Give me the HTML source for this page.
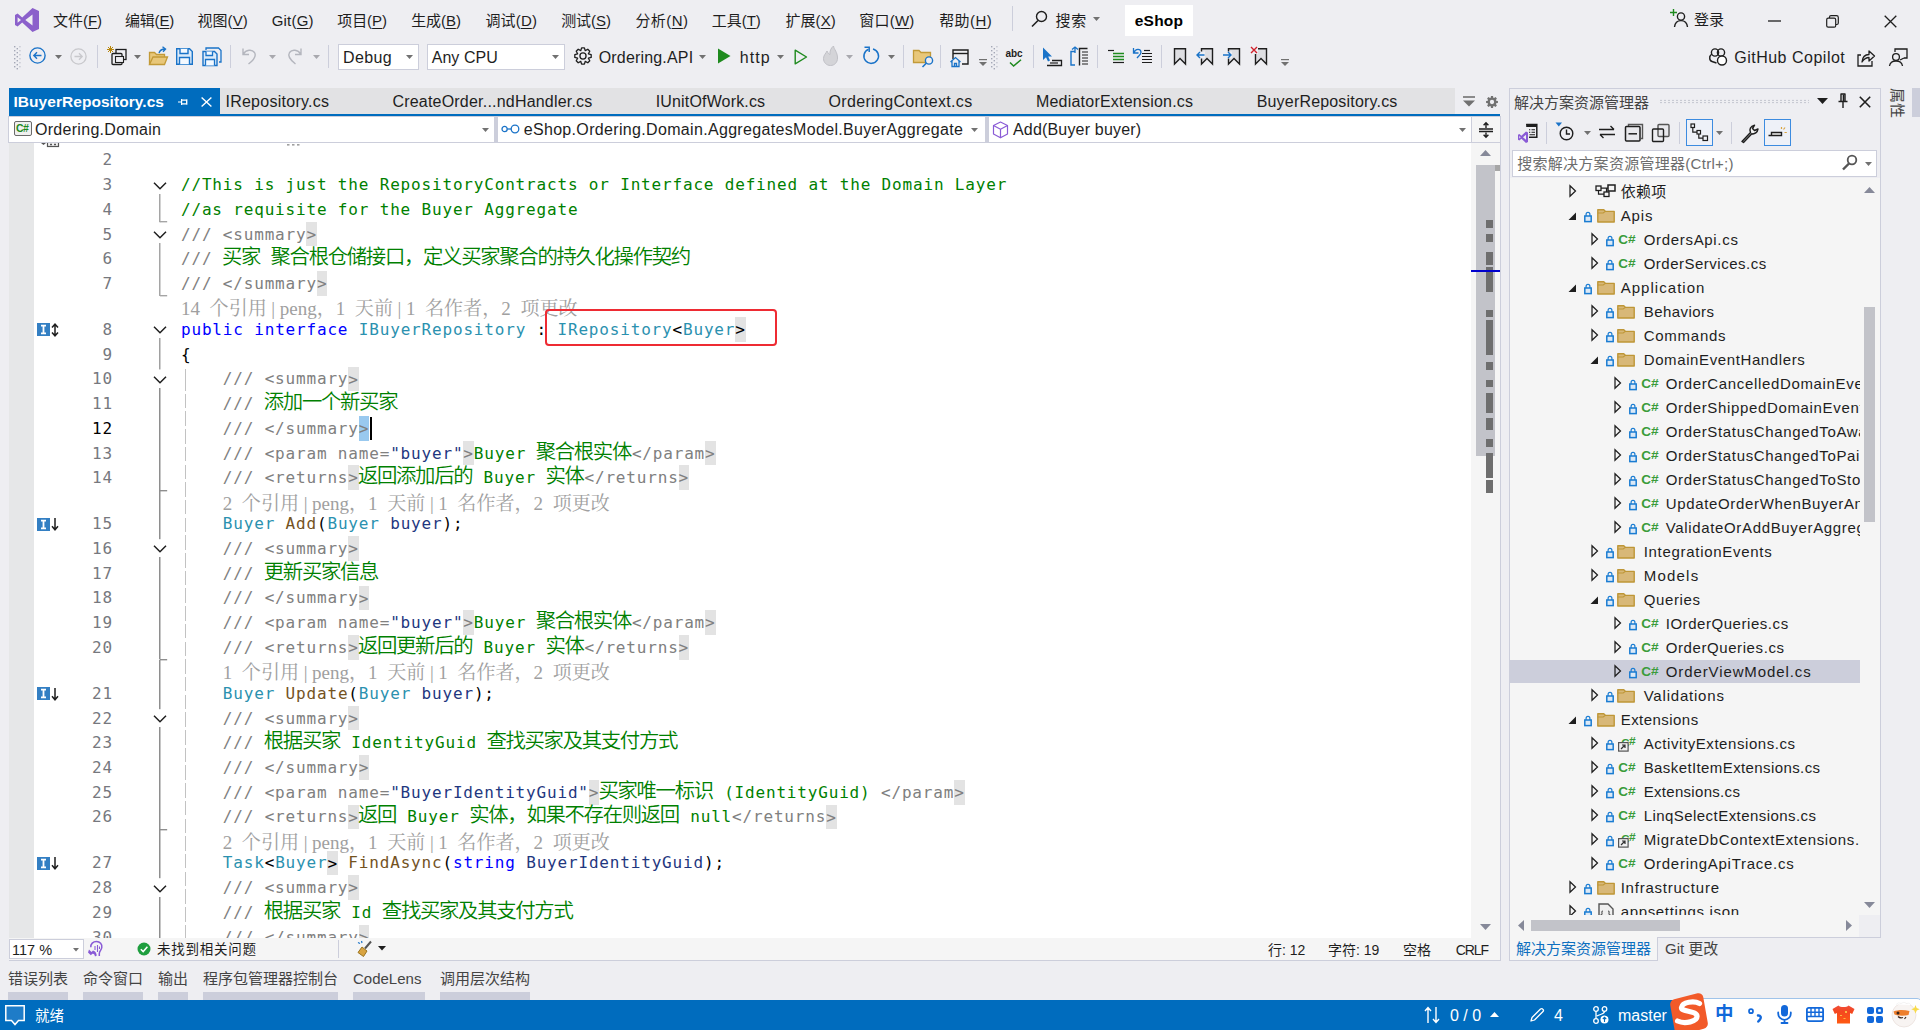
<!DOCTYPE html>
<html lang="zh-CN"><head><meta charset="utf-8"><title>eShop - IBuyerRepository.cs</title>
<style>
html,body{margin:0;padding:0}
body{width:1920px;height:1030px;position:relative;overflow:hidden;background:#EEEEF2;font-family:'Liberation Sans','Noto Sans CJK SC',sans-serif;font-size:15px;color:#1E1E1E}
.a{position:absolute;white-space:nowrap}
.t{position:absolute;white-space:nowrap;line-height:20px;height:20px}
u{text-decoration:underline;text-underline-offset:2px;text-decoration-thickness:1px}
svg{position:absolute;overflow:visible}
.code{position:absolute;white-space:pre;font-family:'DejaVu Sans Mono','Liberation Mono','Noto Sans CJK SC',monospace;font-size:16px;letter-spacing:0.824px;line-height:25px;height:25px;color:#000}
.code .z{font-family:'Noto Sans CJK SC',sans-serif;font-size:20.4px;line-height:0;letter-spacing:-1.33px;font-weight:350;position:relative;left:-0.9px}
.ln{position:absolute;white-space:pre;font-family:'DejaVu Sans Mono','Liberation Mono','Noto Sans CJK SC',monospace;font-size:16px;letter-spacing:0.824px;line-height:25px;height:25px;color:#6E7B8B;width:80px;text-align:right}
.cl{position:absolute;white-space:pre;font-family:'Liberation Serif',serif;font-size:19px;word-spacing:4.8px;line-height:20px;height:20px;color:#A0A0A0}
.cl .cz{font-family:'Noto Serif CJK SC',serif;font-size:19.07px;line-height:0;word-spacing:0}
.cl .cb{display:inline-block;width:13px;text-align:center}
.g{color:#808080}.c{color:#008000}.k{color:#0000FF}.y{color:#2B91AF}.m{color:#74531F}.p{color:#1F377F}
.h{background:#E3E3E3;padding:2.9px 0}
.tr{position:absolute;white-space:nowrap;line-height:24px;height:24px;font-size:15px;color:#1E1E1E}
</style></head><body>

<svg style="left:15px;top:8px" width="24" height="24" viewBox="0 0 24 24"><path d="M17.5 0L24 3V21L17.5 24L7.2 14.6L2.6 18.4L0 17V7L2.6 5.6L7.2 9.4Z M17.5 6.6L10.3 12L17.5 17.4Z M2.6 9.2V14.8L6 12Z" fill="#8B60CB" fill-rule="evenodd"/></svg>
<div class="t" style="left:52.95px;top:11px;font-size:15px;letter-spacing:-0.014px;">文件(<u>F</u>)</div>
<div class="t" style="left:124.95px;top:11px;font-size:15px;letter-spacing:-0.183px;">编辑(<u>E</u>)</div>
<div class="t" style="left:197.45px;top:11px;font-size:15px;letter-spacing:0.067px;">视图(<u>V</u>)</div>
<div class="t" style="left:271.7px;top:11px;font-size:15px;letter-spacing:0.209px;">Git(<u>G</u>)</div>
<div class="t" style="left:337.2px;top:11px;font-size:15px;letter-spacing:-0.033px;">项目(<u>P</u>)</div>
<div class="t" style="left:411.2px;top:11px;font-size:15px;letter-spacing:-0.083px;">生成(<u>B</u>)</div>
<div class="t" style="left:485.45px;top:11px;font-size:15px;letter-spacing:0.151px;">调试(<u>D</u>)</div>
<div class="t" style="left:561.2px;top:11px;font-size:15px;letter-spacing:-0.083px;">测试(<u>S</u>)</div>
<div class="t" style="left:635.45px;top:11px;font-size:15px;letter-spacing:0.401px;">分析(<u>N</u>)</div>
<div class="t" style="left:711.7px;top:11px;font-size:15px;letter-spacing:-0.014px;">工具(<u>T</u>)</div>
<div class="t" style="left:785.45px;top:11px;font-size:15px;letter-spacing:0.067px;">扩展(<u>X</u>)</div>
<div class="t" style="left:859.2px;top:11px;font-size:15px;letter-spacing:0.236px;">窗口(<u>W</u>)</div>
<div class="t" style="left:939.2px;top:11px;font-size:15px;letter-spacing:0.401px;">帮助(<u>H</u>)</div>
<div class="a" style="left:1012px;top:6px;width:1px;height:25px;background:#CCCEDB;"></div>
<svg style="left:1031px;top:10px" width="18" height="18" viewBox="0 0 18 18"><circle cx="10.5" cy="6.5" r="5" fill="none" stroke="#1E1E1E" stroke-width="1.4"/><path d="M7 10.5L1 16.5" stroke="#1E1E1E" stroke-width="1.6"/></svg>
<div class="t" style="left:1055.45px;top:11px;font-size:15px;letter-spacing:0.792px;">搜索</div>
<svg style="left:1092.5px;top:17.0px" width="7" height="4" viewBox="0 0 7 4"><path d="M0 0H7L3.5 4Z" fill="#717171"/></svg>
<div class="a" style="left:1125px;top:5px;width:68px;height:31px;background:#FFFFFF;"></div>
<div class="t" style="left:1134.7px;top:11px;font-size:15.5px;color:#000;letter-spacing:0.245px;"><b>eShop</b></div>
<svg style="left:1670px;top:8px" width="20" height="20" viewBox="0 0 20 20"><path d="M3.5 1V8M0 4.5H7" stroke="#1E8A1E" stroke-width="1.4"/><circle cx="11" cy="8.5" r="3.6" fill="none" stroke="#1E1E1E" stroke-width="1.4"/><path d="M4.5 19C5 14.5 8 12.6 11 12.6S17 14.5 17.5 19" fill="none" stroke="#1E1E1E" stroke-width="1.4"/></svg>
<div class="t" style="left:1694px;top:10px;font-size:15px;">登录</div>
<svg style="left:1768px;top:20px" width="14" height="2" viewBox="0 0 14 2"><path d="M0 1H13" stroke="#1E1E1E" stroke-width="1.3"/></svg>
<svg style="left:1826px;top:15px" width="14" height="14" viewBox="0 0 14 14"><rect x=".7" y="3.2" width="9" height="9" rx="1.5" fill="none" stroke="#1E1E1E" stroke-width="1.2"/><path d="M3.5 3V2.2Q3.5 .7 5 .7H10.5Q12.3 .7 12.3 2.5V8Q12.3 9.5 10.8 9.5H10" fill="none" stroke="#1E1E1E" stroke-width="1.2"/></svg>
<svg style="left:1884px;top:15px" width="14" height="14" viewBox="0 0 14 14"><path d="M.7 .7L12.3 12.3M12.3 .7L.7 12.3" stroke="#1E1E1E" stroke-width="1.3"/></svg>
<svg style="left:14px;top:46px" width="7" height="21" viewBox="0 0 7 21"><rect x="0" y="0" width="1.4" height="1.4" fill="#A4A7B6"/><rect x="2.6" y="2" width="1.4" height="1.4" fill="#A4A7B6"/><rect x="5.2" y="0" width="1.4" height="1.4" fill="#C4C6D0"/><rect x="0" y="4" width="1.4" height="1.4" fill="#A4A7B6"/><rect x="2.6" y="6" width="1.4" height="1.4" fill="#A4A7B6"/><rect x="5.2" y="4" width="1.4" height="1.4" fill="#C4C6D0"/><rect x="0" y="8" width="1.4" height="1.4" fill="#A4A7B6"/><rect x="2.6" y="10" width="1.4" height="1.4" fill="#A4A7B6"/><rect x="5.2" y="8" width="1.4" height="1.4" fill="#C4C6D0"/><rect x="0" y="12" width="1.4" height="1.4" fill="#A4A7B6"/><rect x="2.6" y="14" width="1.4" height="1.4" fill="#A4A7B6"/><rect x="5.2" y="12" width="1.4" height="1.4" fill="#C4C6D0"/><rect x="0" y="16" width="1.4" height="1.4" fill="#A4A7B6"/><rect x="2.6" y="18" width="1.4" height="1.4" fill="#A4A7B6"/><rect x="5.2" y="16" width="1.4" height="1.4" fill="#C4C6D0"/><rect x="0" y="20" width="1.4" height="1.4" fill="#A4A7B6"/><rect x="2.6" y="22" width="1.4" height="1.4" fill="#A4A7B6"/><rect x="5.2" y="20" width="1.4" height="1.4" fill="#C4C6D0"/></svg>
<svg style="left:28px;top:46px" width="20" height="20" viewBox="0 0 20 20"><circle cx="9.5" cy="9.5" r="7.6" fill="none" stroke="#1A73C8" stroke-width="1.4"/><path d="M13.5 9.5H6M9 6.3L5.8 9.5L9 12.7" fill="none" stroke="#1A73C8" stroke-width="1.4"/></svg>
<svg style="left:55.0px;top:55.0px" width="7" height="4" viewBox="0 0 7 4"><path d="M0 0H7L3.5 4Z" fill="#717171"/></svg>
<svg style="left:69px;top:47px" width="20" height="20" viewBox="0 0 20 20"><circle cx="9.5" cy="9.5" r="7.6" fill="none" stroke="#C8C8CC" stroke-width="1.3"/><path d="M5.5 9.5H13M10 6.3L13.2 9.5L10 12.7" fill="none" stroke="#C8C8CC" stroke-width="1.3"/></svg>
<div class="a" style="left:97px;top:45px;width:1px;height:23px;background:#CCCEDB;"></div>
<svg style="left:106px;top:45px" width="24" height="24" viewBox="0 0 24 24"><path d="M4.5 1V8M1 4.5H8M2 2L7 7M7 2L2 7" stroke="#B8860B" stroke-width="1"/>
<rect x="10" y="4.5" width="10" height="10" fill="#F0F0F4" stroke="#1E1E1E" stroke-width="1.3"/>
<rect x="6" y="8.5" width="10" height="11" rx="1" fill="#F0F0F4" stroke="#1E1E1E" stroke-width="1.3"/>
<rect x="9.5" y="11.5" width="8" height="6" fill="#F0F0F4" stroke="#1E1E1E" stroke-width="1.1"/></svg>
<svg style="left:134.0px;top:55.0px" width="7" height="4" viewBox="0 0 7 4"><path d="M0 0H7L3.5 4Z" fill="#717171"/></svg>
<svg style="left:148px;top:46px" width="22" height="22" viewBox="0 0 22 22"><path d="M1.5 18.5V6.5H6.5L8.5 8.5H16.5V11" fill="#E8C77A" stroke="#C29A38" stroke-width="1.3"/>
<path d="M1.5 18.5L5 11H19.5L16.5 18.5Z" fill="#E8C77A" stroke="#C29A38" stroke-width="1.3"/>
<path d="M11 7C12 4 14 3 17 3M14.5 .8L17.5 3L15 5.8" fill="none" stroke="#1A73C8" stroke-width="1.4"/></svg>
<svg style="left:175px;top:47px" width="20" height="20" viewBox="0 0 20 20"><path d="M1.7 1.7H14.5L17.3 4.5V17.3H1.7Z" fill="#DCEBFA" stroke="#1A73C8" stroke-width="1.4"/>
<path d="M5 1.7V6.5H13V1.7M4.5 17.3V10.5H14.5V17.3" fill="#F4F9FF" stroke="#1A73C8" stroke-width="1.4"/></svg>
<svg style="left:201px;top:46px" width="22" height="22" viewBox="0 0 22 22"><path d="M5 4V2H17.5L20 4.5V16H18" fill="none" stroke="#1A73C8" stroke-width="1.3"/>
<path d="M2 5.5H13.5L16 8V19.5H2Z" fill="#DCEBFA" stroke="#1A73C8" stroke-width="1.4"/>
<path d="M5 5.5V9.5H11.5V5.5M4.5 19.5V13.5H13.5V19.5" fill="#F4F9FF" stroke="#1A73C8" stroke-width="1.3"/></svg>
<div class="a" style="left:230px;top:45px;width:1px;height:23px;background:#CCCEDB;"></div>
<svg style="left:240px;top:46px" width="20" height="20" viewBox="0 0 20 20"><path d="M3 2.5V8.5H9M3.3 8.2C6 3.5 12 3 14.5 6.5C17 10.5 13 14.5 8.5 18" fill="none" stroke="#B4B6BE" stroke-width="1.4"/></svg>
<svg style="left:269.0px;top:55.0px" width="7" height="4" viewBox="0 0 7 4"><path d="M0 0H7L3.5 4Z" fill="#A8A8AE"/></svg>
<svg style="left:284px;top:46px" width="20" height="20" viewBox="0 0 20 20"><path d="M17 2.5V8.5H11M16.7 8.2C14 3.5 8 3 5.5 6.5C3 10.5 7 14.5 11.5 18" fill="none" stroke="#B4B6BE" stroke-width="1.4"/></svg>
<svg style="left:313.0px;top:55.0px" width="7" height="4" viewBox="0 0 7 4"><path d="M0 0H7L3.5 4Z" fill="#A8A8AE"/></svg>
<div class="a" style="left:328px;top:45px;width:1px;height:23px;background:#CCCEDB;"></div>
<div class="a" style="left:338px;top:44px;width:81px;height:26px;background:#FFFFFF;border:1px solid #CCCEDB;box-sizing:border-box;"></div>
<div class="t" style="left:342.95px;top:48px;font-size:16px;letter-spacing:0.389px;">Debug</div>
<svg style="left:406.0px;top:55.0px" width="7" height="4" viewBox="0 0 7 4"><path d="M0 0H7L3.5 4Z" fill="#717171"/></svg>
<div class="a" style="left:427px;top:44px;width:138px;height:26px;background:#FFFFFF;border:1px solid #CCCEDB;box-sizing:border-box;"></div>
<div class="t" style="left:431.7px;top:48px;font-size:16px;letter-spacing:0.043px;">Any CPU</div>
<svg style="left:552.0px;top:55.0px" width="7" height="4" viewBox="0 0 7 4"><path d="M0 0H7L3.5 4Z" fill="#717171"/></svg>
<svg style="left:574px;top:47px" width="18" height="18" viewBox="0 0 18 18"><path d="M14.36 6.79L17.18 7.60L17.18 10.40L14.36 11.21L14.35 11.23L15.78 13.79L13.79 15.78L11.23 14.35L11.21 14.36L10.40 17.18L7.60 17.18L6.79 14.36L6.77 14.35L4.21 15.78L2.22 13.79L3.65 11.23L3.64 11.21L0.82 10.40L0.82 7.60L3.64 6.79L3.65 6.77L2.22 4.21L4.21 2.22L6.77 3.65L6.79 3.64L7.60 0.82L10.40 0.82L11.21 3.64L11.23 3.65L13.79 2.22L15.78 4.21L14.35 6.77Z" fill="none" stroke="#1E1E1E" stroke-width="1.3" stroke-linejoin="round"/><circle cx="9.0" cy="9.0" r="3.06" fill="none" stroke="#1E1E1E" stroke-width="1.3"/></svg>
<div class="t" style="left:598.7px;top:48px;font-size:16px;letter-spacing:0.176px;">Ordering.API</div>
<svg style="left:699.0px;top:55.0px" width="7" height="4" viewBox="0 0 7 4"><path d="M0 0H7L3.5 4Z" fill="#717171"/></svg>
<svg style="left:717px;top:48px" width="14" height="16" viewBox="0 0 14 16"><path d="M1 .5L13.5 8L1 15.5Z" fill="#1E8A1E"/></svg>
<div class="t" style="left:739.7px;top:48px;font-size:16px;letter-spacing:1.103px;">http</div>
<svg style="left:777.0px;top:55.0px" width="7" height="4" viewBox="0 0 7 4"><path d="M0 0H7L3.5 4Z" fill="#717171"/></svg>
<svg style="left:794px;top:49px" width="14" height="16" viewBox="0 0 14 16"><path d="M1.2 1.2L12.5 8L1.2 14.8Z" fill="none" stroke="#1E8A1E" stroke-width="1.4" stroke-linejoin="round"/></svg>
<svg style="left:821px;top:45px" width="20" height="22" viewBox="0 0 20 22"><path d="M12.5 1C13 4.5 16.5 7 16.5 13C16.5 17.5 13.5 20.5 9.5 20.5C5.5 20.5 2.5 17.5 2.5 13.5C2.5 10 5 8.5 6 6C7 8 7.5 9 9 9.5C8.5 6 10 3 12.5 1Z" fill="#D4D4D8" stroke="#C0C0C6" stroke-width="1"/></svg>
<svg style="left:846.0px;top:55.0px" width="7" height="4" viewBox="0 0 7 4"><path d="M0 0H7L3.5 4Z" fill="#A8A8AE"/></svg>
<svg style="left:861px;top:46px" width="20" height="20" viewBox="0 0 20 20"><path d="M7.5 3.3A7.3 7.3 0 1 0 12 3" fill="none" stroke="#1A73C8" stroke-width="1.5"/><path d="M3.5 1.2H8.2V6" fill="none" stroke="#1A73C8" stroke-width="1.5"/></svg>
<svg style="left:888.0px;top:55.0px" width="7" height="4" viewBox="0 0 7 4"><path d="M0 0H7L3.5 4Z" fill="#717171"/></svg>
<div class="a" style="left:903px;top:45px;width:1px;height:23px;background:#CCCEDB;"></div>
<svg style="left:912px;top:47px" width="24" height="22" viewBox="0 0 24 22"><path d="M1.5 15.5V3.5H7L9 5.5H18.5V15.5Z" fill="#E8C77A" stroke="#C29A38" stroke-width="1.3"/>
<circle cx="17" cy="13.5" r="3.6" fill="#EEEEF2" stroke="#1A73C8" stroke-width="1.4"/><path d="M14.5 16L10.5 20" stroke="#1A73C8" stroke-width="1.6"/></svg>
<div class="a" style="left:940px;top:45px;width:1px;height:23px;background:#CCCEDB;"></div>
<svg style="left:949px;top:47px" width="22" height="22" viewBox="0 0 22 22"><path d="M4 12V3H19V17H13" fill="none" stroke="#1E1E1E" stroke-width="1.4"/><path d="M4 6.5H19" stroke="#1E1E1E" stroke-width="1.4"/>
<path d="M1.5 15L6.5 10.5L11.5 15M3 14V19.5H10V14M5.5 19.5V16.5H7.5V19.5" fill="none" stroke="#1A73C8" stroke-width="1.3"/></svg>
<svg style="left:979px;top:59px" width="8" height="8" viewBox="0 0 8 8"><path d="M0 .6H8" stroke="#717171" stroke-width="1.2"/><path d="M0 3H8L4 7Z" fill="#717171"/></svg>
<svg style="left:991px;top:46px" width="7" height="21" viewBox="0 0 7 21"><rect x="0" y="0" width="1.4" height="1.4" fill="#A4A7B6"/><rect x="2.6" y="2" width="1.4" height="1.4" fill="#A4A7B6"/><rect x="5.2" y="0" width="1.4" height="1.4" fill="#C4C6D0"/><rect x="0" y="4" width="1.4" height="1.4" fill="#A4A7B6"/><rect x="2.6" y="6" width="1.4" height="1.4" fill="#A4A7B6"/><rect x="5.2" y="4" width="1.4" height="1.4" fill="#C4C6D0"/><rect x="0" y="8" width="1.4" height="1.4" fill="#A4A7B6"/><rect x="2.6" y="10" width="1.4" height="1.4" fill="#A4A7B6"/><rect x="5.2" y="8" width="1.4" height="1.4" fill="#C4C6D0"/><rect x="0" y="12" width="1.4" height="1.4" fill="#A4A7B6"/><rect x="2.6" y="14" width="1.4" height="1.4" fill="#A4A7B6"/><rect x="5.2" y="12" width="1.4" height="1.4" fill="#C4C6D0"/><rect x="0" y="16" width="1.4" height="1.4" fill="#A4A7B6"/><rect x="2.6" y="18" width="1.4" height="1.4" fill="#A4A7B6"/><rect x="5.2" y="16" width="1.4" height="1.4" fill="#C4C6D0"/><rect x="0" y="20" width="1.4" height="1.4" fill="#A4A7B6"/><rect x="2.6" y="22" width="1.4" height="1.4" fill="#A4A7B6"/><rect x="5.2" y="20" width="1.4" height="1.4" fill="#C4C6D0"/></svg>
<div class="t" style="left:1005.5px;top:47.5px;font-size:10px;color:#1E1E1E;letter-spacing:-.1px;line-height:12px;height:12px"><b>abc</b></div>
<svg style="left:1009px;top:58.5px" width="13" height="9" viewBox="0 0 13 9"><path d="M1 3.5L4.6 7L12 .8" fill="none" stroke="#1E8A1E" stroke-width="1.5"/></svg>
<div class="a" style="left:1033px;top:45px;width:1px;height:23px;background:#CCCEDB;"></div>
<svg style="left:1040px;top:46px" width="24" height="22" viewBox="0 0 24 22"><path d="M3 1.5V14L6 11.2L8 15.5L10 14.6L8.2 10.5H12Z" fill="#1A73C8"/>
<path d="M7 19.5H21.5V14.5H12" fill="none" stroke="#1E1E1E" stroke-width="1.3"/><path d="M10 17H18" stroke="#1E1E1E" stroke-width="1.2"/></svg>
<svg style="left:1068px;top:46px" width="24" height="22" viewBox="0 0 24 22"><path d="M7 5.5H3V19H7" fill="none" stroke="#1A73C8" stroke-width="1.4"/><path d="M4 3.5L7 1L10 3.5M7 1V7" fill="none" stroke="#1A73C8" stroke-width="1.3"/>
<path d="M11.5 19.5V2.5H19.5" fill="none" stroke="#1E1E1E" stroke-width="1.4"/><path d="M14 6H20M14 9H20M14 12H20M14 15H20M14 18H20" stroke="#1E1E1E" stroke-width="1.2"/></svg>
<div class="a" style="left:1097px;top:45px;width:1px;height:23px;background:#CCCEDB;"></div>
<svg style="left:1106px;top:48px" width="20" height="18" viewBox="0 0 20 18"><path d="M2 2.5H8" stroke="#1E1E1E" stroke-width="1.2"/><path d="M7 5.5H18M7 8.5H18M7 11.5H18" stroke="#1E8A1E" stroke-width="1.3"/><path d="M7 14.5H18" stroke="#1E1E1E" stroke-width="1.2"/></svg>
<svg style="left:1131px;top:46px" width="24" height="20" viewBox="0 0 24 20"><path d="M2.5 2V7H7.5M3 6.5C4.5 2.5 9.5 2.5 10 6C10.3 8.5 7.5 10 6 12" fill="none" stroke="#1A73C8" stroke-width="1.3"/><path d="M13 4.5H19" stroke="#1E1E1E" stroke-width="1.2"/><path d="M11 7.5H21M11 10.5H21M11 13.5H21M11 16.5H21" stroke="#1E1E1E" stroke-width="1.2"/></svg>
<div class="a" style="left:1161px;top:45px;width:1px;height:23px;background:#CCCEDB;"></div>
<svg style="left:1169px;top:46px" width="22" height="22" viewBox="0 0 22 22"><path d="M5.5 2.7H16.5V18L11 12.6L5.5 18Z" fill="#DEDEE2" stroke="#1E1E1E" stroke-width="1.4" stroke-linejoin="miter"/></svg>
<svg style="left:1196px;top:46px" width="22" height="22" viewBox="0 0 22 22"><path d="M5.5 2.7H16.5V18L11 12.6L5.5 18Z" fill="#DEDEE2" stroke="#1E1E1E" stroke-width="1.4" stroke-linejoin="miter"/><rect x="0" y="5.5" width="9" height="7" fill="#EEEEF2"/><path d="M8.5 9H1M4 6L1 9L4 12" fill="none" stroke="#1A73C8" stroke-width="1.4"/></svg>
<svg style="left:1223px;top:46px" width="22" height="22" viewBox="0 0 22 22"><path d="M5.5 2.7H16.5V18L11 12.6L5.5 18Z" fill="#DEDEE2" stroke="#1E1E1E" stroke-width="1.4" stroke-linejoin="miter"/><rect x="0" y="5.5" width="9" height="7" fill="#EEEEF2"/><path d="M0 9H8M5 6L8 9L5 12" fill="none" stroke="#1A73C8" stroke-width="1.4"/></svg>
<svg style="left:1250px;top:46px" width="22" height="22" viewBox="0 0 22 22"><path d="M5.5 2.7H16.5V18L11 12.6L5.5 18Z" fill="#DEDEE2" stroke="#1E1E1E" stroke-width="1.4" stroke-linejoin="miter"/><rect x="0" y="0" width="8" height="8" fill="#EEEEF2"/><path d="M1 1L7 7M7 1L1 7" stroke="#D0202A" stroke-width="1.4"/></svg>
<svg style="left:1281px;top:59px" width="8" height="8" viewBox="0 0 8 8"><path d="M0 .6H8" stroke="#717171" stroke-width="1.2"/><path d="M0 3H8L4 7Z" fill="#717171"/></svg>
<svg style="left:1708px;top:47px" width="22" height="20" viewBox="0 0 22 20"><circle cx="7" cy="5.5" r="3.6" fill="none" stroke="#1E1E1E" stroke-width="1.4"/><circle cx="13" cy="5.5" r="3.6" fill="none" stroke="#1E1E1E" stroke-width="1.4"/>
<path d="M3.8 7C1 9 1 13.5 4 14.5L8.5 16" fill="none" stroke="#1E1E1E" stroke-width="1.4"/><circle cx="14" cy="13.5" r="4.5" fill="#FFFFFF" stroke="#1E1E1E" stroke-width="1.4"/></svg>
<div class="t" style="left:1734.2px;top:48px;font-size:16px;letter-spacing:0.504px;">GitHub Copilot</div>
<svg style="left:1856px;top:48px" width="20" height="20" viewBox="0 0 20 20"><path d="M5 7H2V18H16V13" fill="none" stroke="#1E1E1E" stroke-width="1.3"/><path d="M6 14C6.5 9 9.5 6.5 13 6.5V3L18.5 8L13 13V9.5C10 9.5 8 11 6 14Z" fill="none" stroke="#1E1E1E" stroke-width="1.3" stroke-linejoin="round"/></svg>
<svg style="left:1887px;top:47px" width="22" height="22" viewBox="0 0 22 22"><path d="M8 5V2H20V11H17" fill="none" stroke="#1E1E1E" stroke-width="1.3"/><circle cx="9" cy="10" r="3.4" fill="none" stroke="#1E1E1E" stroke-width="1.3"/><path d="M2.5 19C3 15.5 6 14 9 14S15 15.5 15.5 19" fill="none" stroke="#1E1E1E" stroke-width="1.3"/><path d="M13 13L17 11" stroke="#1E1E1E" stroke-width="1.3"/></svg>
<div class="a" style="left:9px;top:88px;width:1446px;height:26px;background:#E2E2E4;"></div>
<div class="a" style="left:9px;top:114px;width:1491px;height:2px;background:#006CBE;"></div>
<div class="a" style="left:9px;top:88px;width:211px;height:28px;background:#006CBE;"></div>
<div class="t" style="left:13.45px;top:92px;font-size:15.5px;color:#FFFFFF;letter-spacing:0.052px;"><b>IBuyerRepository.cs</b></div>
<svg style="left:177.5px;top:96.5px" width="10" height="10" viewBox="0 0 10 10"><path d="M0 5H3.6M3.6 2V8M3.6 3.2H8.6V6.8H3.6M8.8 2.2V7.8" fill="none" stroke="#FFFFFF" stroke-width="1.2"/></svg>
<svg style="left:200.5px;top:96.5px" width="11" height="10" viewBox="0 0 11 10"><path d="M.6 .6L10.4 9.6M10.4 .6L.6 9.6" stroke="#FFFFFF" stroke-width="1.4"/></svg>
<div class="t" style="left:225.45px;top:91.5px;font-size:16px;color:#1E1E1E;letter-spacing:0.262px;">IRepository.cs</div>
<div class="t" style="left:392.45px;top:91.5px;font-size:16px;color:#1E1E1E;letter-spacing:0.205px;">CreateOrder...ndHandler.cs</div>
<div class="t" style="left:655.7px;top:91.5px;font-size:16px;color:#1E1E1E;letter-spacing:0.166px;">IUnitOfWork.cs</div>
<div class="t" style="left:828.45px;top:91.5px;font-size:16px;color:#1E1E1E;letter-spacing:0.348px;">OrderingContext.cs</div>
<div class="t" style="left:1035.95px;top:91.5px;font-size:16px;color:#1E1E1E;letter-spacing:0.219px;">MediatorExtension.cs</div>
<div class="t" style="left:1256.7px;top:91.5px;font-size:16px;color:#1E1E1E;letter-spacing:0.182px;">BuyerRepository.cs</div>
<svg style="left:1463px;top:96px" width="12" height="12" viewBox="0 0 12 12"><path d="M0 1H12" stroke="#717171" stroke-width="1.6"/><path d="M0 4.5H12L6 10.5Z" fill="#717171"/></svg>
<svg style="left:1486px;top:95.5px" width="12" height="12" viewBox="0 0 12 12"><path d="M10.24 4.69L11.91 4.98L11.91 7.02L10.24 7.31L9.93 8.07L10.90 9.46L9.46 10.90L8.07 9.93L7.31 10.24L7.02 11.91L4.98 11.91L4.69 10.24L3.93 9.93L2.54 10.90L1.10 9.46L2.07 8.07L1.76 7.31L0.09 7.02L0.09 4.98L1.76 4.69L2.07 3.93L1.10 2.54L2.54 1.10L3.93 2.07L4.69 1.76L4.98 0.09L7.02 0.09L7.31 1.76L8.07 2.07L9.46 1.10L10.90 2.54L9.93 3.93ZM8.16 6.0A2.16 2.16 0 1 0 3.84 6.0A2.16 2.16 0 1 0 8.16 6.0Z" fill="#717171" fill-rule="evenodd"/></svg>
<div class="a" style="left:8px;top:116px;width:1493px;height:27.3px;background:#FFFFFF;border:1px solid #CCCEDB;box-sizing:border-box;border-bottom-width:1.6px"></div>
<div class="a" style="left:494px;top:117px;width:4px;height:25px;background:#CCCEDB;"></div>
<div class="a" style="left:985px;top:117px;width:4px;height:25px;background:#CCCEDB;"></div>
<div class="a" style="left:1471px;top:116px;width:30px;height:27.3px;background:#F5F5F5;border:1px solid #CCCEDB;box-sizing:border-box;border-bottom-width:1.6px"></div>
<div class="a" style="left:14px;top:121px;width:18px;height:15px;background:#F0F0F0;border:1.5px solid #6A6A6A;box-sizing:border-box;border-radius:2px"></div>
<div class="t" style="left:16px;top:120px;font-size:10.5px;color:#1E8A1E;line-height:17px;height:17px;letter-spacing:-.5px"><b>C#</b></div>
<div class="t" style="left:34.95px;top:120px;font-size:16px;letter-spacing:0.301px;">Ordering.Domain</div>
<svg style="left:482.0px;top:128.0px" width="7" height="4" viewBox="0 0 7 4"><path d="M0 0H7L3.5 4Z" fill="#717171"/></svg>
<svg style="left:501px;top:123px" width="20" height="12" viewBox="0 0 20 12"><circle cx="3.6" cy="6" r="2.6" fill="none" stroke="#1A73C8" stroke-width="1.3"/><path d="M6.2 6H10" stroke="#1A73C8" stroke-width="1.3"/><circle cx="14" cy="6" r="3.8" fill="none" stroke="#1A73C8" stroke-width="1.3"/></svg>
<div class="t" style="left:523.7px;top:120px;font-size:16px;letter-spacing:0.329px;">eShop.Ordering.Domain.AggregatesModel.BuyerAggregate</div>
<svg style="left:971.0px;top:128.0px" width="7" height="4" viewBox="0 0 7 4"><path d="M0 0H7L3.5 4Z" fill="#717171"/></svg>
<svg style="left:992px;top:121px" width="17" height="18" viewBox="0 0 17 18"><path d="M8.5 1L15.5 4.5V13L8.5 16.8L1.5 13V4.5Z M1.5 4.5L8.5 8.2L15.5 4.5M8.5 8.2V16.8" fill="none" stroke="#8A5BD6" stroke-width="1.2" stroke-linejoin="round"/></svg>
<div class="t" style="left:1012.95px;top:120px;font-size:16px;letter-spacing:0.185px;">Add(Buyer buyer)</div>
<svg style="left:1459.0px;top:128.0px" width="7" height="4" viewBox="0 0 7 4"><path d="M0 0H7L3.5 4Z" fill="#717171"/></svg>
<svg style="left:1479px;top:122px" width="14" height="16" viewBox="0 0 14 16"><path d="M0 7H14M0 9.5H14" stroke="#1E1E1E" stroke-width="1.3"/><path d="M7 .8V6M4.6 3.2L7 .8L9.4 3.2M7 15.2V10.5M4.6 12.8L7 15.2L9.4 12.8" fill="none" stroke="#1E1E1E" stroke-width="1.4"/></svg>
<div class="a" style="left:9px;top:143.3px;width:1492px;height:794.7px;background:#FFFFFF;overflow:hidden">
<div class="a" style="left:0px;top:0px;width:25px;height:795px;background:#E6E7E8;"></div>
<div class="a" style="left:1462px;top:0px;width:29px;height:795px;background:#F5F5F5;"></div>
<div class="a" style="left:1491px;top:0px;width:1px;height:795px;background:#CCCEDB;"></div>
<svg style="left:32px;top:0px" width="20" height="5" viewBox="0 0 20 5"><path d="M0 0H5L2.5 2Z" fill="#555"/><rect x="6.5" y="-4" width="11" height="7.5" fill="#F0F0F0" stroke="#555" stroke-width="1.2"/><path d="M9 1.5H11M13 1.5H15" stroke="#555" stroke-width="1.4"/></svg>
<svg style="left:278px;top:1px" width="14" height="3" viewBox="0 0 14 3"><rect x="0" y="0" width="2.5" height="1.6" fill="#A0A0A0"/><rect x="5" y="0" width="2.5" height="1.6" fill="#A0A0A0"/><rect x="10" y="0" width="2.5" height="1.6" fill="#A0A0A0"/></svg>
<svg style="left:150.45px;top:50.31999999999999px" width="1.5" height="28.22" viewBox="0 0 1.5 28.22"><rect x="0" y="0" width="1.5" height="28.22" fill="#A5A5A5"/></svg>
<svg style="left:150.5px;top:77.94px" width="7.2" height="1.4" viewBox="0 0 7.2 1.4"><rect x="0" y="0" width="7.2" height="1.4" fill="#A5A5A5"/></svg>
<svg style="left:150.45px;top:99.75999999999999px" width="1.5" height="52.94" viewBox="0 0 1.5 52.94"><rect x="0" y="0" width="1.5" height="52.94" fill="#A5A5A5"/></svg>
<svg style="left:150.5px;top:152.1px" width="7.2" height="1.4" viewBox="0 0 7.2 1.4"><rect x="0" y="0" width="7.2" height="1.4" fill="#A5A5A5"/></svg>
<svg style="left:150.45px;top:195.17000000000002px" width="1.5" height="31.43999999999994" viewBox="0 0 1.5 31.43999999999994"><rect x="0" y="0" width="1.5" height="31.43999999999994" fill="#A0A0A0"/></svg>
<svg style="left:150.45px;top:244.60999999999996px" width="1.5" height="102.38" viewBox="0 0 1.5 102.38"><rect x="0" y="0" width="1.5" height="102.38" fill="#8E8E8E"/></svg>
<svg style="left:150.5px;top:346.38999999999993px" width="7.2" height="1.4" viewBox="0 0 7.2 1.4"><rect x="0" y="0" width="7.2" height="1.4" fill="#8E8E8E"/></svg>
<svg style="left:150.45px;top:346.98999999999995px" width="1.5" height="49.190000000000055" viewBox="0 0 1.5 49.190000000000055"><rect x="0" y="0" width="1.5" height="49.190000000000055" fill="#8E8E8E"/></svg>
<svg style="left:150.45px;top:414.18px" width="1.5" height="102.38" viewBox="0 0 1.5 102.38"><rect x="0" y="0" width="1.5" height="102.38" fill="#8E8E8E"/></svg>
<svg style="left:150.5px;top:515.9599999999999px" width="7.2" height="1.4" viewBox="0 0 7.2 1.4"><rect x="0" y="0" width="7.2" height="1.4" fill="#8E8E8E"/></svg>
<svg style="left:150.45px;top:516.56px" width="1.5" height="49.18999999999994" viewBox="0 0 1.5 49.18999999999994"><rect x="0" y="0" width="1.5" height="49.18999999999994" fill="#8E8E8E"/></svg>
<svg style="left:150.45px;top:583.75px" width="1.5" height="102.38" viewBox="0 0 1.5 102.38"><rect x="0" y="0" width="1.5" height="102.38" fill="#8E8E8E"/></svg>
<svg style="left:150.5px;top:685.5299999999999px" width="7.2" height="1.4" viewBox="0 0 7.2 1.4"><rect x="0" y="0" width="7.2" height="1.4" fill="#8E8E8E"/></svg>
<svg style="left:150.45px;top:686.1299999999999px" width="1.5" height="49.190000000000055" viewBox="0 0 1.5 49.190000000000055"><rect x="0" y="0" width="1.5" height="49.190000000000055" fill="#8E8E8E"/></svg>
<svg style="left:150.45px;top:753.3199999999999px" width="1.5" height="43.379999999999995" viewBox="0 0 1.5 43.379999999999995"><rect x="0" y="0" width="1.5" height="43.379999999999995" fill="#8E8E8E"/></svg>
<svg style="left:144px;top:38.31999999999999px" width="14" height="8" viewBox="0 0 14 8"><path d="M1 .8L7 6.8L13 .8" fill="none" stroke="#1E1E1E" stroke-width="1.5"/></svg>
<svg style="left:144px;top:87.75999999999999px" width="14" height="8" viewBox="0 0 14 8"><path d="M1 .8L7 6.8L13 .8" fill="none" stroke="#1E1E1E" stroke-width="1.5"/></svg>
<svg style="left:144px;top:183.17000000000002px" width="14" height="8" viewBox="0 0 14 8"><path d="M1 .8L7 6.8L13 .8" fill="none" stroke="#1E1E1E" stroke-width="1.5"/></svg>
<svg style="left:144px;top:232.60999999999996px" width="14" height="8" viewBox="0 0 14 8"><path d="M1 .8L7 6.8L13 .8" fill="none" stroke="#1E1E1E" stroke-width="1.5"/></svg>
<svg style="left:144px;top:402.18px" width="14" height="8" viewBox="0 0 14 8"><path d="M1 .8L7 6.8L13 .8" fill="none" stroke="#1E1E1E" stroke-width="1.5"/></svg>
<svg style="left:144px;top:571.75px" width="14" height="8" viewBox="0 0 14 8"><path d="M1 .8L7 6.8L13 .8" fill="none" stroke="#1E1E1E" stroke-width="1.5"/></svg>
<svg style="left:144px;top:741.3199999999999px" width="14" height="8" viewBox="0 0 14 8"><path d="M1 .8L7 6.8L13 .8" fill="none" stroke="#1E1E1E" stroke-width="1.5"/></svg>
<div class="a" style="left:175.6px;top:223.60999999999996px;height:573.09px;width:1.3px;background:repeating-linear-gradient(to bottom,#C2C2C2 0,#C2C2C2 14.5px,transparent 14.5px,transparent 17.7px);background-position:0 9.0px"></div>
<div class="a" style="left:27.5px;top:180.17000000000002px;width:13px;height:13px;background:#337FC3;"></div><svg style="left:27.5px;top:180.17000000000002px" width="13" height="13" viewBox="0 0 13 13"><path d="M4 2.7H9M4 10.3H9M6.5 2.7V10.3" stroke="#FFFFFF" stroke-width="1.8"/></svg><svg style="left:42px;top:179.67000000000002px" width="8" height="14" viewBox="0 0 8 14"><path d="M4 1.5V12.5M1 4.5L4 1.2L7 4.5M1 9.5L4 12.8L7 9.5" fill="none" stroke="#1E1E1E" stroke-width="1.5"/></svg>
<div class="a" style="left:27.5px;top:374.46px;width:13px;height:13px;background:#337FC3;"></div><svg style="left:27.5px;top:374.46px" width="13" height="13" viewBox="0 0 13 13"><path d="M4 2.7H9M4 10.3H9M6.5 2.7V10.3" stroke="#FFFFFF" stroke-width="1.8"/></svg><svg style="left:42px;top:373.96px" width="8" height="14" viewBox="0 0 8 14"><path d="M4 1V12.5M1 9.3L4 12.8L7 9.3" fill="none" stroke="#1E1E1E" stroke-width="1.5"/></svg>
<div class="a" style="left:27.5px;top:544.03px;width:13px;height:13px;background:#337FC3;"></div><svg style="left:27.5px;top:544.03px" width="13" height="13" viewBox="0 0 13 13"><path d="M4 2.7H9M4 10.3H9M6.5 2.7V10.3" stroke="#FFFFFF" stroke-width="1.8"/></svg><svg style="left:42px;top:543.53px" width="8" height="14" viewBox="0 0 8 14"><path d="M4 1V12.5M1 9.3L4 12.8L7 9.3" fill="none" stroke="#1E1E1E" stroke-width="1.5"/></svg>
<div class="a" style="left:27.5px;top:713.5999999999999px;width:13px;height:13px;background:#337FC3;"></div><svg style="left:27.5px;top:713.5999999999999px" width="13" height="13" viewBox="0 0 13 13"><path d="M4 2.7H9M4 10.3H9M6.5 2.7V10.3" stroke="#FFFFFF" stroke-width="1.8"/></svg><svg style="left:42px;top:713.0999999999999px" width="8" height="14" viewBox="0 0 8 14"><path d="M4 1V12.5M1 9.3L4 12.8L7 9.3" fill="none" stroke="#1E1E1E" stroke-width="1.5"/></svg>
<div class="ln" style="left:24px;top:4.10px;color:#76787E">2</div>
<div class="ln" style="left:24px;top:28.82px;color:#76787E">3</div>
<div class="code" style="left:172px;top:28.82px"><span class="c">//This is just the RepositoryContracts or Interface defined at the Domain Layer</span></div>
<div class="ln" style="left:24px;top:53.54px;color:#76787E">4</div>
<div class="code" style="left:172px;top:53.54px"><span class="c">//as requisite for the Buyer Aggregate</span></div>
<div class="ln" style="left:24px;top:78.26px;color:#76787E">5</div>
<div class="code" style="left:172px;top:78.26px"><span class="g">/// </span><span class="g">&lt;summary</span><span class="g h">&gt;</span></div>
<div class="ln" style="left:24px;top:102.98px;color:#76787E">6</div>
<div class="code" style="left:172px;top:102.98px"><span class="g">/// </span><span class="c"><span class="z">买家</span> <span class="z">聚合根仓储接口，定义买家聚合的持久化操作契约</span></span></div>
<div class="ln" style="left:24px;top:127.70px;color:#76787E">7</div>
<div class="code" style="left:172px;top:127.70px"><span class="g">/// </span><span class="g">&lt;/summary</span><span class="g h">&gt;</span></div>
<div class="ln" style="left:24px;top:173.67px;color:#76787E">8</div>
<div class="code" style="left:172px;top:173.67px"><span class="k">public</span> <span class="k">interface</span> <span class="y">IBuyerRepository</span> : <span class="y">IRepository</span>&lt;<span class="y">Buyer</span><span class="h">&gt;</span></div>
<div class="cl" style="left:172.0px;top:156.16px">14 <span class="cz">个引用</span><span class="cb">|</span>peng<span class="cz">，</span>1 <span class="cz">天前</span><span class="cb">|</span>1 <span class="cz">名作者，</span>2 <span class="cz">项更改</span></div>
<div class="ln" style="left:24px;top:198.39px;color:#76787E">9</div>
<div class="code" style="left:172px;top:198.39px">{</div>
<div class="ln" style="left:24px;top:223.11px;color:#76787E">10</div>
<div class="code" style="left:172px;top:223.11px">    <span class="g">/// </span><span class="g">&lt;summary</span><span class="g h">&gt;</span></div>
<div class="ln" style="left:24px;top:247.83px;color:#76787E">11</div>
<div class="code" style="left:172px;top:247.83px">    <span class="g">/// </span><span class="c"><span class="z">添加一个新买家</span></span></div>
<div class="ln" style="left:24px;top:272.55px;color:#000000">12</div>
<div class="code" style="left:172px;top:272.55px">    <span class="g">/// </span><span class="g">&lt;/summary</span><span class="g" style="background:#99C9EF;padding:2.9px 0">&gt;</span></div>
<div class="ln" style="left:24px;top:297.27px;color:#76787E">13</div>
<div class="code" style="left:172px;top:297.27px">    <span class="g">/// </span><span class="g">&lt;param name=</span><span class="p">"buyer"</span><span class="g h">&gt;</span><span class="c">Buyer <span class="z">聚合根实体</span></span><span class="g">&lt;/param</span><span class="g h">&gt;</span></div>
<div class="ln" style="left:24px;top:321.99px;color:#76787E">14</div>
<div class="code" style="left:172px;top:321.99px">    <span class="g">/// </span><span class="g">&lt;returns</span><span class="g h">&gt;</span><span class="c"><span class="z">返回添加后的</span> Buyer <span class="z">实体</span></span><span class="g">&lt;/returns</span><span class="g h">&gt;</span></div>
<div class="ln" style="left:24px;top:367.96px;color:#76787E">15</div>
<div class="code" style="left:172px;top:367.96px">    <span class="y">Buyer</span> <span class="m">Add</span>(<span class="y">Buyer</span> <span class="p">buyer</span>);</div>
<div class="cl" style="left:213.8px;top:350.45px">2 <span class="cz">个引用</span><span class="cb">|</span>peng<span class="cz">，</span>1 <span class="cz">天前</span><span class="cb">|</span>1 <span class="cz">名作者，</span>2 <span class="cz">项更改</span></div>
<div class="ln" style="left:24px;top:392.68px;color:#76787E">16</div>
<div class="code" style="left:172px;top:392.68px">    <span class="g">/// </span><span class="g">&lt;summary</span><span class="g h">&gt;</span></div>
<div class="ln" style="left:24px;top:417.40px;color:#76787E">17</div>
<div class="code" style="left:172px;top:417.40px">    <span class="g">/// </span><span class="c"><span class="z">更新买家信息</span></span></div>
<div class="ln" style="left:24px;top:442.12px;color:#76787E">18</div>
<div class="code" style="left:172px;top:442.12px">    <span class="g">/// </span><span class="g">&lt;/summary</span><span class="g h">&gt;</span></div>
<div class="ln" style="left:24px;top:466.84px;color:#76787E">19</div>
<div class="code" style="left:172px;top:466.84px">    <span class="g">/// </span><span class="g">&lt;param name=</span><span class="p">"buyer"</span><span class="g h">&gt;</span><span class="c">Buyer <span class="z">聚合根实体</span></span><span class="g">&lt;/param</span><span class="g h">&gt;</span></div>
<div class="ln" style="left:24px;top:491.56px;color:#76787E">20</div>
<div class="code" style="left:172px;top:491.56px">    <span class="g">/// </span><span class="g">&lt;returns</span><span class="g h">&gt;</span><span class="c"><span class="z">返回更新后的</span> Buyer <span class="z">实体</span></span><span class="g">&lt;/returns</span><span class="g h">&gt;</span></div>
<div class="ln" style="left:24px;top:537.53px;color:#76787E">21</div>
<div class="code" style="left:172px;top:537.53px">    <span class="y">Buyer</span> <span class="m">Update</span>(<span class="y">Buyer</span> <span class="p">buyer</span>);</div>
<div class="cl" style="left:213.8px;top:520.02px">1 <span class="cz">个引用</span><span class="cb">|</span>peng<span class="cz">，</span>1 <span class="cz">天前</span><span class="cb">|</span>1 <span class="cz">名作者，</span>2 <span class="cz">项更改</span></div>
<div class="ln" style="left:24px;top:562.25px;color:#76787E">22</div>
<div class="code" style="left:172px;top:562.25px">    <span class="g">/// </span><span class="g">&lt;summary</span><span class="g h">&gt;</span></div>
<div class="ln" style="left:24px;top:586.97px;color:#76787E">23</div>
<div class="code" style="left:172px;top:586.97px">    <span class="g">/// </span><span class="c"><span class="z">根据买家</span> IdentityGuid <span class="z">查找买家及其支付方式</span></span></div>
<div class="ln" style="left:24px;top:611.69px;color:#76787E">24</div>
<div class="code" style="left:172px;top:611.69px">    <span class="g">/// </span><span class="g">&lt;/summary</span><span class="g h">&gt;</span></div>
<div class="ln" style="left:24px;top:636.41px;color:#76787E">25</div>
<div class="code" style="left:172px;top:636.41px">    <span class="g">/// </span><span class="g">&lt;param name=</span><span class="p">"BuyerIdentityGuid"</span><span class="g h">&gt;</span><span class="c"><span class="z">买家唯一标识</span> (IdentityGuid) </span><span class="g">&lt;/param</span><span class="g h">&gt;</span></div>
<div class="ln" style="left:24px;top:661.13px;color:#76787E">26</div>
<div class="code" style="left:172px;top:661.13px">    <span class="g">/// </span><span class="g">&lt;returns</span><span class="g h">&gt;</span><span class="c"><span class="z">返回</span> Buyer <span class="z">实体，如果不存在则返回</span> null</span><span class="g">&lt;/returns</span><span class="g h">&gt;</span></div>
<div class="ln" style="left:24px;top:707.10px;color:#76787E">27</div>
<div class="code" style="left:172px;top:707.10px">    <span class="y">Task</span>&lt;<span class="y">Buyer</span><span class="h">&gt;</span> <span class="m">FindAsync</span>(<span class="k">string</span> <span class="p">BuyerIdentityGuid</span>);</div>
<div class="cl" style="left:213.8px;top:689.59px">2 <span class="cz">个引用</span><span class="cb">|</span>peng<span class="cz">，</span>1 <span class="cz">天前</span><span class="cb">|</span>1 <span class="cz">名作者，</span>2 <span class="cz">项更改</span></div>
<div class="ln" style="left:24px;top:731.82px;color:#76787E">28</div>
<div class="code" style="left:172px;top:731.82px">    <span class="g">/// </span><span class="g">&lt;summary</span><span class="g h">&gt;</span></div>
<div class="ln" style="left:24px;top:756.54px;color:#76787E">29</div>
<div class="code" style="left:172px;top:756.54px">    <span class="g">/// </span><span class="c"><span class="z">根据买家</span> Id <span class="z">查找买家及其支付方式</span></span></div>
<div class="ln" style="left:24px;top:781.26px;color:#76787E">30</div>
<div class="code" style="left:172px;top:781.26px">    <span class="g">/// </span><span class="g">&lt;/summary</span><span class="g h">&gt;</span></div>
<div class="a" style="left:360.508px;top:273.55px;width:2px;height:23px;background:#000;"></div>
<div class="a" style="left:536px;top:165.7px;width:232px;height:37px;border:2px solid #EE2B33;box-sizing:border-box;border-radius:4px"></div>
<svg style="left:1471px;top:6.699999999999989px" width="11" height="6" viewBox="0 0 11 6"><path d="M0 6L5.5 0L11 6Z" fill="#868999"/></svg>
<svg style="left:1471px;top:780.7px" width="11" height="6" viewBox="0 0 11 6"><path d="M0 0L5.5 6L11 0Z" fill="#868999"/></svg>
<div class="a" style="left:1467px;top:21.69999999999999px;width:19px;height:291px;background:#C2C3C9;"></div>
<div class="a" style="left:1485.5px;top:21.69999999999999px;width:5.5px;height:6px;background:#A6A6A6;"></div>
<div class="a" style="left:1477px;top:76.69999999999999px;width:7px;height:8px;background:#6E6E6E;"></div>
<div class="a" style="left:1477px;top:90.69999999999999px;width:7px;height:8px;background:#6E6E6E;"></div>
<div class="a" style="left:1477px;top:108.69999999999999px;width:7px;height:13px;background:#6E6E6E;"></div>
<div class="a" style="left:1477px;top:123.69999999999999px;width:7px;height:25px;background:#6E6E6E;"></div>
<div class="a" style="left:1477px;top:166.7px;width:7px;height:7px;background:#6E6E6E;"></div>
<div class="a" style="left:1477px;top:176.7px;width:7px;height:35px;background:#6E6E6E;"></div>
<div class="a" style="left:1477px;top:218.7px;width:7px;height:8px;background:#6E6E6E;"></div>
<div class="a" style="left:1477px;top:236.7px;width:7px;height:7px;background:#6E6E6E;"></div>
<div class="a" style="left:1477px;top:249.7px;width:7px;height:20px;background:#6E6E6E;"></div>
<div class="a" style="left:1477px;top:274.7px;width:7px;height:12px;background:#6E6E6E;"></div>
<div class="a" style="left:1477px;top:295.7px;width:7px;height:8px;background:#6E6E6E;"></div>
<div class="a" style="left:1477px;top:309.7px;width:7px;height:25px;background:#6E6E6E;"></div>
<div class="a" style="left:1477px;top:336.7px;width:7px;height:13px;background:#6E6E6E;"></div>
<div class="a" style="left:1462px;top:126.69999999999999px;width:29px;height:2px;background:#0000CD;"></div>
</div>
<div class="a" style="left:9px;top:938px;width:1492px;height:23px;background:#F5F5F5;"></div>
<div class="a" style="left:9px;top:960px;width:1492px;height:1px;background:#CCCEDB;"></div>
<div class="a" style="left:1500px;top:938px;width:1px;height:23px;background:#CCCEDB;"></div>
<div class="a" style="left:9px;top:939px;width:75px;height:20px;background:#FFFFFF;border:1px solid #CCCEDB;box-sizing:border-box;"></div>
<div class="t" style="left:12px;top:940px;font-size:14.5px;">117 %</div>
<svg style="left:73.0px;top:947.75px" width="6" height="3.5" viewBox="0 0 6 3.5"><path d="M0 0H6L3.0 3.5Z" fill="#717171"/></svg>
<svg style="left:87px;top:940px" width="18" height="18" viewBox="0 0 18 18"><path d="M9.5 1.5C6 1.5 3.6 4 3.8 7.2M9.5 1.5C13 1.5 15.3 4.2 14.8 7.5C14.4 10 12.5 11 12.3 13.5V16" fill="none" stroke="#8A5BD6" stroke-width="1.5"/><path d="M8 6V10M10.5 5V12M12.5 6.5V9" stroke="#8A5BD6" stroke-width="1.1"/><path d="M2 9.5L4.5 12L6 10.5C7.5 11.5 9 11 9.8 15.5L8 16.5C7.5 14 6.5 13.5 5.5 13.8L3.8 15.3L1 12.5Z" fill="#8A5BD6"/></svg>
<svg style="left:137px;top:942px" width="14" height="14" viewBox="0 0 14 14"><circle cx="7" cy="7" r="6.5" fill="#1E9E3E"/><path d="M3.8 7.2L6.2 9.6L10.4 4.8" fill="none" stroke="#FFF" stroke-width="1.5"/></svg>
<div class="t" style="left:157.1px;top:940px;font-size:13.5px;letter-spacing:0.729px;">未找到相关问题</div>
<div class="a" style="left:338px;top:940px;width:1px;height:18px;background:#CCCEDB;"></div>
<svg style="left:356px;top:940px" width="18" height="18" viewBox="0 0 18 18"><path d="M15 1.5L9 8.5" stroke="#555" stroke-width="2"/><path d="M6 7L11 11L7.5 16.5L2 12.5Z" fill="#D9A441" stroke="#9A7420" stroke-width="1"/><path d="M2 2.5L4 3.5M5.5 1L6 3" stroke="#1A73C8" stroke-width="1.2"/></svg>
<svg style="left:378.0px;top:946.25px" width="8" height="4.5" viewBox="0 0 8 4.5"><path d="M0 0H8L4.0 4.5Z" fill="#1E1E1E"/></svg>
<div class="t" style="left:1268px;top:940px;font-size:14px;">行: 12</div>
<div class="t" style="left:1328px;top:940px;font-size:14px;">字符: 19</div>
<div class="t" style="left:1403px;top:940px;font-size:14px;">空格</div>
<div class="t" style="left:1455.7px;top:940px;font-size:14px;letter-spacing:-1.041px;">CRLF</div>
<div class="t" style="left:8px;top:969px;font-size:15px;color:#444444;">错误列表</div>
<div class="a" style="left:8px;top:992px;width:60px;height:8px;background:#CCCEDB;"></div>
<div class="t" style="left:83px;top:969px;font-size:15px;color:#444444;">命令窗口</div>
<div class="a" style="left:83px;top:992px;width:60px;height:8px;background:#CCCEDB;"></div>
<div class="t" style="left:158px;top:969px;font-size:15px;color:#444444;">输出</div>
<div class="a" style="left:158px;top:992px;width:30px;height:8px;background:#CCCEDB;"></div>
<div class="t" style="left:203px;top:969px;font-size:15px;color:#444444;">程序包管理器控制台</div>
<div class="a" style="left:203px;top:992px;width:135px;height:8px;background:#CCCEDB;"></div>
<div class="t" style="left:353px;top:969px;font-size:15px;color:#444444;">CodeLens</div>
<div class="a" style="left:353px;top:992px;width:72px;height:8px;background:#CCCEDB;"></div>
<div class="t" style="left:440px;top:969px;font-size:15px;color:#444444;">调用层次结构</div>
<div class="a" style="left:440px;top:992px;width:90px;height:8px;background:#CCCEDB;"></div>
<div class="a" style="left:0px;top:1000px;width:1920px;height:30px;background:#006CBE;"></div>
<svg style="left:5px;top:1005px" width="21" height="21" viewBox="0 0 21 21"><path d="M.8 .8H19.2V15.5H13.5L10 19.5L6.5 15.5H.8Z" fill="#1E7CC8" stroke="#FFFFFF" stroke-width="1.5"/></svg>
<div class="t" style="left:35px;top:1006px;font-size:14.5px;color:#FFFFFF;">就绪</div>
<svg style="left:1424px;top:1006px" width="16" height="18" viewBox="0 0 16 18"><path d="M4 17V2M1 5L4 1.5L7 5M12 1V16M9 13L12 16.5L15 13" fill="none" stroke="#FFFFFF" stroke-width="1.4"/></svg>
<div class="t" style="left:1450px;top:1006px;font-size:16px;color:#FFFFFF;">0 / 0</div>
<svg style="left:1490px;top:1012px" width="9" height="5" viewBox="0 0 9 5"><path d="M0 5L4.5 0L9 5Z" fill="#FFFFFF"/></svg>
<svg style="left:1529px;top:1007px" width="16" height="16" viewBox="0 0 16 16"><path d="M2 14L3 10.5L11.5 2Q13 1 14 2.5Q15 3.5 14 4.5L5.5 13Z" fill="none" stroke="#FFFFFF" stroke-width="1.3" stroke-linejoin="round"/></svg>
<div class="t" style="left:1554px;top:1006px;font-size:16px;color:#FFFFFF;">4</div>
<svg style="left:1592px;top:1005px" width="18" height="20" viewBox="0 0 18 20"><circle cx="4" cy="4" r="2.3" fill="none" stroke="#FFF" stroke-width="1.3"/><circle cx="4" cy="16" r="2.3" fill="none" stroke="#FFF" stroke-width="1.3"/><circle cx="12.5" cy="4" r="2.3" fill="none" stroke="#FFF" stroke-width="1.3"/><path d="M4 6.3V13.7M12.5 6.3C12.5 9.5 8 9 5 11" fill="none" stroke="#FFF" stroke-width="1.3"/><circle cx="12.5" cy="14.5" r="4" fill="#FFF"/><path d="M12.5 17V12.3M10.8 14L12.5 12.2L14.2 14" fill="none" stroke="#006CBE" stroke-width="1.1"/></svg>
<div class="t" style="left:1618px;top:1006px;font-size:16px;color:#FFFFFF;">master</div>
<div class="a" style="left:1698px;top:998px;width:224px;height:36px;background:#FFFFFF;border:1px solid #9FC3EA;box-sizing:border-box;border-radius:5px"></div>
<div class="a" style="left:1671.5px;top:995.5px;width:34px;height:36px;background:#F25A29;border-radius:5px;transform:rotate(-14deg) skewX(-4deg)"></div>
<svg style="left:1672px;top:996px" width="36" height="34" viewBox="0 0 36 34"><path d="M27.5 7.5C22 4.5 10.5 6 9.5 11.5C8.8 16 24.5 14.5 25 20C25.5 25.5 13 28.5 5.5 25" fill="none" stroke="#FFFFFF" stroke-width="5.2" stroke-linecap="round"/></svg>
<div class="t" style="left:1715px;top:1003px;font-size:18.5px;color:#1268DA;line-height:22px;height:22px"><b>中</b></div>
<svg style="left:1748px;top:1008px" width="15" height="14" viewBox="0 0 15 14"><circle cx="3" cy="3.2" r="2" fill="none" stroke="#1268DA" stroke-width="1.7"/><path d="M10 7.5C12.5 7 13.5 9.5 12 11.5L10.3 13.5" fill="none" stroke="#1268DA" stroke-width="2.4" stroke-linecap="round"/></svg>
<svg style="left:1777px;top:1005px" width="15" height="19" viewBox="0 0 15 19"><rect x="4" y="0" width="7" height="11.5" rx="3.5" fill="#1268DA"/><path d="M1.2 7.5V8.5A6.3 6.3 0 0 0 13.8 8.5V7.5M7.5 15V18M4.5 18H10.5" fill="none" stroke="#1268DA" stroke-width="1.8" stroke-linecap="round"/></svg>
<svg style="left:1806px;top:1007px" width="18" height="15" viewBox="0 0 18 15"><rect x=".9" y=".9" width="16.2" height="13.2" rx="1.8" fill="none" stroke="#1268DA" stroke-width="1.8"/><path d="M1 5.2H17M1 9.5H17M5 1V9.5M9 1V9.5M13 1V9.5" stroke="#1268DA" stroke-width="1.4"/></svg>
<svg style="left:1832px;top:1005px" width="23" height="19" viewBox="0 0 23 19"><defs><linearGradient id="sg" x1="0" y1="0" x2="0" y2="1"><stop offset="0" stop-color="#F0503C"/><stop offset=".35" stop-color="#F4471F"/><stop offset="1" stop-color="#FF5A12"/></linearGradient></defs><path d="M6.5 .5L.5 4L2.8 9L5 8V18.5H18V8L20.2 9L22.5 4L16.5 .5C15 2.5 8 2.5 6.5 .5Z" fill="url(#sg)"/><path d="M13 6L15 8M15 6L13 8M8 10.5H10M11.5 13.5H13.5" stroke="#F9C64A" stroke-width=".9"/></svg>
<svg style="left:1867px;top:1007px" width="16" height="16" viewBox="0 0 16 16"><rect x="0" y="0" width="7" height="7" rx="2" fill="#1268DA"/><rect x="9" y="0" width="7" height="7" rx="2" fill="#1268DA"/><rect x="0" y="9" width="7" height="7" rx="2" fill="#1268DA"/><rect x="9" y="9" width="7" height="7" rx="2" fill="#1268DA"/><rect x="11.2" y="2.2" width="2.6" height="2.6" rx=".6" fill="#FFFFFF"/></svg>
<svg style="left:1891px;top:1000px" width="29" height="28" viewBox="0 0 29 28"><circle cx="13" cy="15" r="12" fill="#F8F4F2" stroke="#EADFDC" stroke-width=".8"/><path d="M5 4.5Q8 1.5 10 3.5Q13 1 15.5 3.5Q18.5 2 20 5" fill="#FFFFFF" stroke="#EEE" stroke-width=".6"/><path d="M2.5 11.5C7 9.5 13 9.5 18.5 11L17.5 15C13 16 7 16 3.5 14.5Z" fill="#EE7F2D"/><circle cx="7" cy="13" r="1.5" fill="#3A241A"/><path d="M7 16.5Q9 18.5 12 17.5M15 17L13.5 19" stroke="#3A241A" stroke-width="1.2" fill="none"/><path d="M24.5 5L25.7 8L28.7 9.2L25.7 10.4L24.5 13.4L23.3 10.4L20.3 9.2L23.3 8Z" fill="#F8DB4A"/></svg>
<div class="a" style="left:1509px;top:88px;width:372px;height:873px;background:#F5F5F5;border:1px solid #CCCEDB;box-sizing:border-box;"></div>
<div class="a" style="left:1510px;top:89px;width:370px;height:88.5px;background:#EEEEF2;"></div>
<div class="t" style="left:1514px;top:93px;font-size:15px;color:#444444;">解决方案资源管理器</div>
<div class="a" style="left:1659px;top:99px;width:150px;height:5px;background-image:radial-gradient(circle,#B8BAC6 0.7px,transparent 0.9px);background-size:4px 2.5px"></div>
<svg style="left:1817px;top:98px" width="11" height="6" viewBox="0 0 11 6"><path d="M0 0H11L5.5 6Z" fill="#1E1E1E"/></svg>
<svg style="left:1838px;top:93px" width="10" height="16" viewBox="0 0 10 16"><path d="M2.5 1H7.5M3 1V8.5M7 1V8.5M.5 8.5H9.5M5 8.5V15" fill="none" stroke="#1E1E1E" stroke-width="1.4"/><path d="M5.5 1.5V8" stroke="#1E1E1E" stroke-width="1.6"/></svg>
<svg style="left:1859px;top:96px" width="12" height="12" viewBox="0 0 12 12"><path d="M.8 .8L11.2 11.2M11.2 .8L.8 11.2" stroke="#1E1E1E" stroke-width="1.6"/></svg>
<svg style="left:1517px;top:122px" width="22" height="22" viewBox="0 0 22 22"><path d="M9.2 2.5H19.8V15.3H12" fill="none" stroke="#1E1E1E" stroke-width="1.5"/><path d="M9.2 2H19.8V5H9.2Z" fill="#1E1E1E"/><path d="M12 7.8H13.3M14.5 7.8H18M12 10.3H13.3M14.5 10.3H18M12.5 12.8H18" stroke="#1E1E1E" stroke-width="1.1"/><path d="M9 9.5L11 10.5V20L9 21L4.4 16.8L2.3 18.5L1 17.8V12.7L2.3 12L4.4 13.7Z M9 12.8L6 15.25L9 17.7Z M2.3 14V16.5L3.7 15.25Z" fill="#8A5BD6" fill-rule="evenodd"/></svg>
<div class="a" style="left:1546px;top:122px;width:1px;height:22px;background:#CCCEDB;"></div>
<svg style="left:1555px;top:122px" width="22" height="22" viewBox="0 0 22 22"><path d="M.5 .5H7L3.8 4.5Z" fill="#1A73C8"/><circle cx="11.5" cy="11.5" r="6.3" fill="none" stroke="#1E1E1E" stroke-width="1.4"/><path d="M11.5 7.5V12H15" fill="none" stroke="#1E1E1E" stroke-width="1.4"/></svg>
<svg style="left:1583.5px;top:130.5px" width="7" height="4" viewBox="0 0 7 4"><path d="M0 0H7L3.5 4Z" fill="#717171"/></svg>
<svg style="left:1598px;top:125px" width="18" height="14" viewBox="0 0 18 14"><path d="M1 4.5H16M12.5 1L16 4.5M17 9.5H2M5.5 13L2 9.5" fill="none" stroke="#1E1E1E" stroke-width="1.4"/></svg>
<svg style="left:1624px;top:123px" width="20" height="20" viewBox="0 0 20 20"><path d="M4.5 3V1.5H18.5V15.5H17" fill="none" stroke="#555" stroke-width="1.4"/><rect x="1.5" y="3.5" width="14.5" height="14.5" rx="1" fill="#E8E8EC" stroke="#1E1E1E" stroke-width="1.5"/><path d="M4.5 10.8H13" stroke="#1E1E1E" stroke-width="1.5"/></svg>
<svg style="left:1651px;top:123px" width="20" height="20" viewBox="0 0 20 20"><rect x="7" y="1.5" width="11" height="12" rx="1" fill="#E8E8EC" stroke="#555" stroke-width="1.4"/><rect x="1.5" y="6" width="11" height="12.5" rx="1" fill="none" stroke="#1E1E1E" stroke-width="1.4"/></svg>
<div class="a" style="left:1679px;top:122px;width:1px;height:22px;background:#CCCEDB;"></div>
<div class="a" style="left:1686px;top:119px;width:27px;height:27px;background:#EEF1F8;border:1px solid #3C8BE0;box-sizing:border-box;"></div>
<svg style="left:1690px;top:123px" width="20" height="20" viewBox="0 0 20 20"><rect x="1" y="1" width="3.5" height="3.5" fill="none" stroke="#1E1E1E" stroke-width="1.2"/><rect x="7" y="7.5" width="3.5" height="3.5" fill="none" stroke="#1E1E1E" stroke-width="1.2"/><rect x="13" y="13" width="4.5" height="4.5" fill="none" stroke="#1E1E1E" stroke-width="1.2"/><path d="M2.8 4.5V9.2H7M8.8 11V15.2H13" fill="none" stroke="#1E1E1E" stroke-width="1.2"/></svg>
<svg style="left:1716.0px;top:130.5px" width="7" height="4" viewBox="0 0 7 4"><path d="M0 0H7L3.5 4Z" fill="#717171"/></svg>
<div class="a" style="left:1731px;top:122px;width:1px;height:22px;background:#CCCEDB;"></div>
<svg style="left:1740px;top:122px" width="20" height="22" viewBox="0 0 20 22"><path d="M2 19.5L10.5 10.5C9 7.5 10.5 4 14.5 3.2L12.5 6.5L14.5 8.5L18 7C17.5 10.5 14.5 12.5 11.8 11.8L3.5 20.5Z" fill="#F5F5F5" stroke="#1E1E1E" stroke-width="1.5" stroke-linejoin="round"/></svg>
<div class="a" style="left:1764px;top:119px;width:27px;height:27px;background:#EEF1F8;border:1px solid #3C8BE0;box-sizing:border-box;"></div>
<svg style="left:1768px;top:124px" width="20" height="16" viewBox="0 0 20 16"><path d="M.5 11.5H3.5V8.5H13.5V11.5H3.5" fill="#F5F5F5" stroke="#1E1E1E" stroke-width="1.4"/><path d="M15.5 5.5L17 3.5M16.5 8.5H18.8M13.5 5V3" stroke="#D9A441" stroke-width="1.2"/></svg>
<div class="a" style="left:1512px;top:150px;width:365px;height:27px;background:#FFFFFF;border:1px solid #CCCEDB;box-sizing:border-box;"></div>
<div class="t" style="left:1517.2px;top:154px;font-size:15px;color:#6D6D6D;letter-spacing:0.282px;">搜索解决方案资源管理器(Ctrl+;)</div>
<svg style="left:1841px;top:154px" width="18" height="18" viewBox="0 0 18 18"><circle cx="11" cy="6" r="4.3" fill="none" stroke="#555" stroke-width="1.8"/><path d="M8 9.5L2 15.5" stroke="#555" stroke-width="2.4"/></svg>
<svg style="left:1865.0px;top:161.5px" width="7" height="4" viewBox="0 0 7 4"><path d="M0 0H7L3.5 4Z" fill="#717171"/></svg>
<div class="a" style="left:1510px;top:180px;width:350px;height:735px;overflow:hidden">
<svg style="left:58.8px;top:5px" width="8" height="12" viewBox="0 0 8 12"><path d="M1 .8L6.5 6L1 11.2Z" fill="none" stroke="#1E1E1E" stroke-width="1.25" stroke-linejoin="miter"/></svg>
<svg style="left:85px;top:4px" width="22" height="14" viewBox="0 0 22 14"><rect x="1" y="2" width="5" height="4.5" fill="none" stroke="#1E1E1E" stroke-width="1.3"/><rect x="9" y="8" width="5" height="4.5" fill="none" stroke="#1E1E1E" stroke-width="1.3"/><rect x="13" y="1" width="7" height="6" fill="none" stroke="#1E1E1E" stroke-width="1.5"/><path d="M6 4.2H13M3.5 6.5V10.2H9M11.5 8V4.2" fill="none" stroke="#1E1E1E" stroke-width="1.2"/></svg>
<div class="tr" style="left:110.7px;top:-0.5px;font-size:15px;letter-spacing:0.228px;">依赖项</div>
<svg style="left:57.5px;top:32px" width="9" height="9" viewBox="0 0 9 9"><path d="M8 .5V8H.5Z" fill="#1E1E1E"/></svg>
<svg style="left:74px;top:31.4px" width="8" height="12" viewBox="0 0 8 12"><rect x=".8" y="5" width="6.4" height="5.6" fill="#DCE9F6" stroke="#1A7CD2" stroke-width="1.5"/><path d="M2.1 5V3.2A1.9 1.9 0 0 1 5.9 3.2V5" fill="none" stroke="#1A7CD2" stroke-width="1.2"/></svg>
<svg style="left:86.7px;top:28.5px" width="18" height="14" viewBox="0 0 18 14"><path d="M.8 13V.8H6.8L8.6 2.4H17.2V13Z" fill="#D8B878" stroke="#BE9636" stroke-width="1.4" stroke-linejoin="round"/><path d="M.8 4H6.2L8.4 2.4" fill="none" stroke="#BE9636" stroke-width="1.1"/></svg>
<div class="tr" style="left:110.7px;top:23.5px;font-size:15px;letter-spacing:0.853px;">Apis</div>
<svg style="left:80.8px;top:53px" width="8" height="12" viewBox="0 0 8 12"><path d="M1 .8L6.5 6L1 11.2Z" fill="none" stroke="#1E1E1E" stroke-width="1.25" stroke-linejoin="miter"/></svg>
<svg style="left:96px;top:55.4px" width="8" height="12" viewBox="0 0 8 12"><rect x=".8" y="5" width="6.4" height="5.6" fill="#DCE9F6" stroke="#1A7CD2" stroke-width="1.5"/><path d="M2.1 5V3.2A1.9 1.9 0 0 1 5.9 3.2V5" fill="none" stroke="#1A7CD2" stroke-width="1.2"/></svg>
<div class="t" style="left:108.3px;top:51.2px;font-size:13.5px;color:#3A9C3A;line-height:18px;height:18px"><b>C</b></div><div class="t" style="left:118.2px;top:50px;font-size:11px;color:#3A9C3A;line-height:18px;height:18px;transform:scaleX(1.25);transform-origin:left"><b>#</b></div>
<div class="tr" style="left:133.7px;top:47.5px;font-size:15px;letter-spacing:0.683px;">OrdersApi.cs</div>
<svg style="left:80.8px;top:77px" width="8" height="12" viewBox="0 0 8 12"><path d="M1 .8L6.5 6L1 11.2Z" fill="none" stroke="#1E1E1E" stroke-width="1.25" stroke-linejoin="miter"/></svg>
<svg style="left:96px;top:79.4px" width="8" height="12" viewBox="0 0 8 12"><rect x=".8" y="5" width="6.4" height="5.6" fill="#DCE9F6" stroke="#1A7CD2" stroke-width="1.5"/><path d="M2.1 5V3.2A1.9 1.9 0 0 1 5.9 3.2V5" fill="none" stroke="#1A7CD2" stroke-width="1.2"/></svg>
<div class="t" style="left:108.3px;top:75.2px;font-size:13.5px;color:#3A9C3A;line-height:18px;height:18px"><b>C</b></div><div class="t" style="left:118.2px;top:74px;font-size:11px;color:#3A9C3A;line-height:18px;height:18px;transform:scaleX(1.25);transform-origin:left"><b>#</b></div>
<div class="tr" style="left:133.7px;top:71.5px;font-size:15px;letter-spacing:0.498px;">OrderServices.cs</div>
<svg style="left:57.5px;top:104px" width="9" height="9" viewBox="0 0 9 9"><path d="M8 .5V8H.5Z" fill="#1E1E1E"/></svg>
<svg style="left:74px;top:103.4px" width="8" height="12" viewBox="0 0 8 12"><rect x=".8" y="5" width="6.4" height="5.6" fill="#DCE9F6" stroke="#1A7CD2" stroke-width="1.5"/><path d="M2.1 5V3.2A1.9 1.9 0 0 1 5.9 3.2V5" fill="none" stroke="#1A7CD2" stroke-width="1.2"/></svg>
<svg style="left:86.7px;top:100.5px" width="18" height="14" viewBox="0 0 18 14"><path d="M.8 13V.8H6.8L8.6 2.4H17.2V13Z" fill="#D8B878" stroke="#BE9636" stroke-width="1.4" stroke-linejoin="round"/><path d="M.8 4H6.2L8.4 2.4" fill="none" stroke="#BE9636" stroke-width="1.1"/></svg>
<div class="tr" style="left:110.7px;top:95.5px;font-size:15px;letter-spacing:1.037px;">Application</div>
<svg style="left:80.8px;top:125px" width="8" height="12" viewBox="0 0 8 12"><path d="M1 .8L6.5 6L1 11.2Z" fill="none" stroke="#1E1E1E" stroke-width="1.25" stroke-linejoin="miter"/></svg>
<svg style="left:96px;top:127.4px" width="8" height="12" viewBox="0 0 8 12"><rect x=".8" y="5" width="6.4" height="5.6" fill="#DCE9F6" stroke="#1A7CD2" stroke-width="1.5"/><path d="M2.1 5V3.2A1.9 1.9 0 0 1 5.9 3.2V5" fill="none" stroke="#1A7CD2" stroke-width="1.2"/></svg>
<svg style="left:106.7px;top:124.5px" width="18" height="14" viewBox="0 0 18 14"><path d="M.8 13V.8H6.8L8.6 2.4H17.2V13Z" fill="#D8B878" stroke="#BE9636" stroke-width="1.4" stroke-linejoin="round"/><path d="M.8 4H6.2L8.4 2.4" fill="none" stroke="#BE9636" stroke-width="1.1"/></svg>
<div class="tr" style="left:133.7px;top:119.5px;font-size:15px;letter-spacing:0.455px;">Behaviors</div>
<svg style="left:80.8px;top:149px" width="8" height="12" viewBox="0 0 8 12"><path d="M1 .8L6.5 6L1 11.2Z" fill="none" stroke="#1E1E1E" stroke-width="1.25" stroke-linejoin="miter"/></svg>
<svg style="left:96px;top:151.4px" width="8" height="12" viewBox="0 0 8 12"><rect x=".8" y="5" width="6.4" height="5.6" fill="#DCE9F6" stroke="#1A7CD2" stroke-width="1.5"/><path d="M2.1 5V3.2A1.9 1.9 0 0 1 5.9 3.2V5" fill="none" stroke="#1A7CD2" stroke-width="1.2"/></svg>
<svg style="left:106.7px;top:148.5px" width="18" height="14" viewBox="0 0 18 14"><path d="M.8 13V.8H6.8L8.6 2.4H17.2V13Z" fill="#D8B878" stroke="#BE9636" stroke-width="1.4" stroke-linejoin="round"/><path d="M.8 4H6.2L8.4 2.4" fill="none" stroke="#BE9636" stroke-width="1.1"/></svg>
<div class="tr" style="left:133.7px;top:143.5px;font-size:15px;letter-spacing:0.737px;">Commands</div>
<svg style="left:79.5px;top:176px" width="9" height="9" viewBox="0 0 9 9"><path d="M8 .5V8H.5Z" fill="#1E1E1E"/></svg>
<svg style="left:96px;top:175.4px" width="8" height="12" viewBox="0 0 8 12"><rect x=".8" y="5" width="6.4" height="5.6" fill="#DCE9F6" stroke="#1A7CD2" stroke-width="1.5"/><path d="M2.1 5V3.2A1.9 1.9 0 0 1 5.9 3.2V5" fill="none" stroke="#1A7CD2" stroke-width="1.2"/></svg>
<svg style="left:106.7px;top:172.5px" width="18" height="14" viewBox="0 0 18 14"><path d="M.8 13V.8H6.8L8.6 2.4H17.2V13Z" fill="#D8B878" stroke="#BE9636" stroke-width="1.4" stroke-linejoin="round"/><path d="M.8 4H6.2L8.4 2.4" fill="none" stroke="#BE9636" stroke-width="1.1"/></svg>
<div class="tr" style="left:133.7px;top:167.5px;font-size:15px;letter-spacing:0.612px;">DomainEventHandlers</div>
<svg style="left:103.8px;top:197px" width="8" height="12" viewBox="0 0 8 12"><path d="M1 .8L6.5 6L1 11.2Z" fill="none" stroke="#1E1E1E" stroke-width="1.25" stroke-linejoin="miter"/></svg>
<svg style="left:119px;top:199.4px" width="8" height="12" viewBox="0 0 8 12"><rect x=".8" y="5" width="6.4" height="5.6" fill="#DCE9F6" stroke="#1A7CD2" stroke-width="1.5"/><path d="M2.1 5V3.2A1.9 1.9 0 0 1 5.9 3.2V5" fill="none" stroke="#1A7CD2" stroke-width="1.2"/></svg>
<div class="t" style="left:131.3px;top:195.2px;font-size:13.5px;color:#3A9C3A;line-height:18px;height:18px"><b>C</b></div><div class="t" style="left:141.2px;top:194px;font-size:11px;color:#3A9C3A;line-height:18px;height:18px;transform:scaleX(1.25);transform-origin:left"><b>#</b></div>
<div class="tr" style="left:155.7px;top:191.5px;font-size:15px;letter-spacing:0.658px">OrderCancelledDomainEventHandler.cs</div>
<svg style="left:103.8px;top:221px" width="8" height="12" viewBox="0 0 8 12"><path d="M1 .8L6.5 6L1 11.2Z" fill="none" stroke="#1E1E1E" stroke-width="1.25" stroke-linejoin="miter"/></svg>
<svg style="left:119px;top:223.4px" width="8" height="12" viewBox="0 0 8 12"><rect x=".8" y="5" width="6.4" height="5.6" fill="#DCE9F6" stroke="#1A7CD2" stroke-width="1.5"/><path d="M2.1 5V3.2A1.9 1.9 0 0 1 5.9 3.2V5" fill="none" stroke="#1A7CD2" stroke-width="1.2"/></svg>
<div class="t" style="left:131.3px;top:219.2px;font-size:13.5px;color:#3A9C3A;line-height:18px;height:18px"><b>C</b></div><div class="t" style="left:141.2px;top:218px;font-size:11px;color:#3A9C3A;line-height:18px;height:18px;transform:scaleX(1.25);transform-origin:left"><b>#</b></div>
<div class="tr" style="left:155.7px;top:215.5px;font-size:15px;letter-spacing:0.658px">OrderShippedDomainEventHandler.cs</div>
<svg style="left:103.8px;top:245px" width="8" height="12" viewBox="0 0 8 12"><path d="M1 .8L6.5 6L1 11.2Z" fill="none" stroke="#1E1E1E" stroke-width="1.25" stroke-linejoin="miter"/></svg>
<svg style="left:119px;top:247.4px" width="8" height="12" viewBox="0 0 8 12"><rect x=".8" y="5" width="6.4" height="5.6" fill="#DCE9F6" stroke="#1A7CD2" stroke-width="1.5"/><path d="M2.1 5V3.2A1.9 1.9 0 0 1 5.9 3.2V5" fill="none" stroke="#1A7CD2" stroke-width="1.2"/></svg>
<div class="t" style="left:131.3px;top:243.2px;font-size:13.5px;color:#3A9C3A;line-height:18px;height:18px"><b>C</b></div><div class="t" style="left:141.2px;top:242px;font-size:11px;color:#3A9C3A;line-height:18px;height:18px;transform:scaleX(1.25);transform-origin:left"><b>#</b></div>
<div class="tr" style="left:155.7px;top:239.5px;font-size:15px;letter-spacing:0.658px">OrderStatusChangedToAwaitingValidationDomainEventHandler.cs</div>
<svg style="left:103.8px;top:269px" width="8" height="12" viewBox="0 0 8 12"><path d="M1 .8L6.5 6L1 11.2Z" fill="none" stroke="#1E1E1E" stroke-width="1.25" stroke-linejoin="miter"/></svg>
<svg style="left:119px;top:271.4px" width="8" height="12" viewBox="0 0 8 12"><rect x=".8" y="5" width="6.4" height="5.6" fill="#DCE9F6" stroke="#1A7CD2" stroke-width="1.5"/><path d="M2.1 5V3.2A1.9 1.9 0 0 1 5.9 3.2V5" fill="none" stroke="#1A7CD2" stroke-width="1.2"/></svg>
<div class="t" style="left:131.3px;top:267.2px;font-size:13.5px;color:#3A9C3A;line-height:18px;height:18px"><b>C</b></div><div class="t" style="left:141.2px;top:266px;font-size:11px;color:#3A9C3A;line-height:18px;height:18px;transform:scaleX(1.25);transform-origin:left"><b>#</b></div>
<div class="tr" style="left:155.7px;top:263.5px;font-size:15px;letter-spacing:0.658px">OrderStatusChangedToPaidDomainEventHandler.cs</div>
<svg style="left:103.8px;top:293px" width="8" height="12" viewBox="0 0 8 12"><path d="M1 .8L6.5 6L1 11.2Z" fill="none" stroke="#1E1E1E" stroke-width="1.25" stroke-linejoin="miter"/></svg>
<svg style="left:119px;top:295.4px" width="8" height="12" viewBox="0 0 8 12"><rect x=".8" y="5" width="6.4" height="5.6" fill="#DCE9F6" stroke="#1A7CD2" stroke-width="1.5"/><path d="M2.1 5V3.2A1.9 1.9 0 0 1 5.9 3.2V5" fill="none" stroke="#1A7CD2" stroke-width="1.2"/></svg>
<div class="t" style="left:131.3px;top:291.2px;font-size:13.5px;color:#3A9C3A;line-height:18px;height:18px"><b>C</b></div><div class="t" style="left:141.2px;top:290px;font-size:11px;color:#3A9C3A;line-height:18px;height:18px;transform:scaleX(1.25);transform-origin:left"><b>#</b></div>
<div class="tr" style="left:155.7px;top:287.5px;font-size:15px;letter-spacing:0.658px">OrderStatusChangedToStockConfirmedDomainEventHandler.cs</div>
<svg style="left:103.8px;top:317px" width="8" height="12" viewBox="0 0 8 12"><path d="M1 .8L6.5 6L1 11.2Z" fill="none" stroke="#1E1E1E" stroke-width="1.25" stroke-linejoin="miter"/></svg>
<svg style="left:119px;top:319.4px" width="8" height="12" viewBox="0 0 8 12"><rect x=".8" y="5" width="6.4" height="5.6" fill="#DCE9F6" stroke="#1A7CD2" stroke-width="1.5"/><path d="M2.1 5V3.2A1.9 1.9 0 0 1 5.9 3.2V5" fill="none" stroke="#1A7CD2" stroke-width="1.2"/></svg>
<div class="t" style="left:131.3px;top:315.2px;font-size:13.5px;color:#3A9C3A;line-height:18px;height:18px"><b>C</b></div><div class="t" style="left:141.2px;top:314px;font-size:11px;color:#3A9C3A;line-height:18px;height:18px;transform:scaleX(1.25);transform-origin:left"><b>#</b></div>
<div class="tr" style="left:155.7px;top:311.5px;font-size:15px;letter-spacing:0.658px">UpdateOrderWhenBuyerAndPaymentMethodVerifiedDomainEventHandler.cs</div>
<svg style="left:103.8px;top:341px" width="8" height="12" viewBox="0 0 8 12"><path d="M1 .8L6.5 6L1 11.2Z" fill="none" stroke="#1E1E1E" stroke-width="1.25" stroke-linejoin="miter"/></svg>
<svg style="left:119px;top:343.4px" width="8" height="12" viewBox="0 0 8 12"><rect x=".8" y="5" width="6.4" height="5.6" fill="#DCE9F6" stroke="#1A7CD2" stroke-width="1.5"/><path d="M2.1 5V3.2A1.9 1.9 0 0 1 5.9 3.2V5" fill="none" stroke="#1A7CD2" stroke-width="1.2"/></svg>
<div class="t" style="left:131.3px;top:339.2px;font-size:13.5px;color:#3A9C3A;line-height:18px;height:18px"><b>C</b></div><div class="t" style="left:141.2px;top:338px;font-size:11px;color:#3A9C3A;line-height:18px;height:18px;transform:scaleX(1.25);transform-origin:left"><b>#</b></div>
<div class="tr" style="left:155.7px;top:335.5px;font-size:15px;letter-spacing:0.658px">ValidateOrAddBuyerAggregateWhenOrderStartedDomainEventHandler.cs</div>
<svg style="left:80.8px;top:365px" width="8" height="12" viewBox="0 0 8 12"><path d="M1 .8L6.5 6L1 11.2Z" fill="none" stroke="#1E1E1E" stroke-width="1.25" stroke-linejoin="miter"/></svg>
<svg style="left:96px;top:367.4px" width="8" height="12" viewBox="0 0 8 12"><rect x=".8" y="5" width="6.4" height="5.6" fill="#DCE9F6" stroke="#1A7CD2" stroke-width="1.5"/><path d="M2.1 5V3.2A1.9 1.9 0 0 1 5.9 3.2V5" fill="none" stroke="#1A7CD2" stroke-width="1.2"/></svg>
<svg style="left:106.7px;top:364.5px" width="18" height="14" viewBox="0 0 18 14"><path d="M.8 13V.8H6.8L8.6 2.4H17.2V13Z" fill="#D8B878" stroke="#BE9636" stroke-width="1.4" stroke-linejoin="round"/><path d="M.8 4H6.2L8.4 2.4" fill="none" stroke="#BE9636" stroke-width="1.1"/></svg>
<div class="tr" style="left:133.7px;top:359.5px;font-size:15px;letter-spacing:0.703px;">IntegrationEvents</div>
<svg style="left:80.8px;top:389px" width="8" height="12" viewBox="0 0 8 12"><path d="M1 .8L6.5 6L1 11.2Z" fill="none" stroke="#1E1E1E" stroke-width="1.25" stroke-linejoin="miter"/></svg>
<svg style="left:96px;top:391.4px" width="8" height="12" viewBox="0 0 8 12"><rect x=".8" y="5" width="6.4" height="5.6" fill="#DCE9F6" stroke="#1A7CD2" stroke-width="1.5"/><path d="M2.1 5V3.2A1.9 1.9 0 0 1 5.9 3.2V5" fill="none" stroke="#1A7CD2" stroke-width="1.2"/></svg>
<svg style="left:106.7px;top:388.5px" width="18" height="14" viewBox="0 0 18 14"><path d="M.8 13V.8H6.8L8.6 2.4H17.2V13Z" fill="#D8B878" stroke="#BE9636" stroke-width="1.4" stroke-linejoin="round"/><path d="M.8 4H6.2L8.4 2.4" fill="none" stroke="#BE9636" stroke-width="1.1"/></svg>
<div class="tr" style="left:133.7px;top:383.5px;font-size:15px;letter-spacing:1.223px;">Models</div>
<svg style="left:79.5px;top:416px" width="9" height="9" viewBox="0 0 9 9"><path d="M8 .5V8H.5Z" fill="#1E1E1E"/></svg>
<svg style="left:96px;top:415.4px" width="8" height="12" viewBox="0 0 8 12"><rect x=".8" y="5" width="6.4" height="5.6" fill="#DCE9F6" stroke="#1A7CD2" stroke-width="1.5"/><path d="M2.1 5V3.2A1.9 1.9 0 0 1 5.9 3.2V5" fill="none" stroke="#1A7CD2" stroke-width="1.2"/></svg>
<svg style="left:106.7px;top:412.5px" width="18" height="14" viewBox="0 0 18 14"><path d="M.8 13V.8H6.8L8.6 2.4H17.2V13Z" fill="#D8B878" stroke="#BE9636" stroke-width="1.4" stroke-linejoin="round"/><path d="M.8 4H6.2L8.4 2.4" fill="none" stroke="#BE9636" stroke-width="1.1"/></svg>
<div class="tr" style="left:133.7px;top:407.5px;font-size:15px;letter-spacing:0.624px;">Queries</div>
<svg style="left:103.8px;top:437px" width="8" height="12" viewBox="0 0 8 12"><path d="M1 .8L6.5 6L1 11.2Z" fill="none" stroke="#1E1E1E" stroke-width="1.25" stroke-linejoin="miter"/></svg>
<svg style="left:119px;top:439.4px" width="8" height="12" viewBox="0 0 8 12"><rect x=".8" y="5" width="6.4" height="5.6" fill="#DCE9F6" stroke="#1A7CD2" stroke-width="1.5"/><path d="M2.1 5V3.2A1.9 1.9 0 0 1 5.9 3.2V5" fill="none" stroke="#1A7CD2" stroke-width="1.2"/></svg>
<div class="t" style="left:131.3px;top:435.2px;font-size:13.5px;color:#3A9C3A;line-height:18px;height:18px"><b>C</b></div><div class="t" style="left:141.2px;top:434px;font-size:11px;color:#3A9C3A;line-height:18px;height:18px;transform:scaleX(1.25);transform-origin:left"><b>#</b></div>
<div class="tr" style="left:155.7px;top:431.5px;font-size:15px;letter-spacing:0.550px;">IOrderQueries.cs</div>
<svg style="left:103.8px;top:461px" width="8" height="12" viewBox="0 0 8 12"><path d="M1 .8L6.5 6L1 11.2Z" fill="none" stroke="#1E1E1E" stroke-width="1.25" stroke-linejoin="miter"/></svg>
<svg style="left:119px;top:463.4px" width="8" height="12" viewBox="0 0 8 12"><rect x=".8" y="5" width="6.4" height="5.6" fill="#DCE9F6" stroke="#1A7CD2" stroke-width="1.5"/><path d="M2.1 5V3.2A1.9 1.9 0 0 1 5.9 3.2V5" fill="none" stroke="#1A7CD2" stroke-width="1.2"/></svg>
<div class="t" style="left:131.3px;top:459.2px;font-size:13.5px;color:#3A9C3A;line-height:18px;height:18px"><b>C</b></div><div class="t" style="left:141.2px;top:458px;font-size:11px;color:#3A9C3A;line-height:18px;height:18px;transform:scaleX(1.25);transform-origin:left"><b>#</b></div>
<div class="tr" style="left:155.7px;top:455.5px;font-size:15px;letter-spacing:0.590px;">OrderQueries.cs</div>
<div class="a" style="left:0px;top:479.5px;width:350px;height:23.5px;background:#CCCEDB;"></div>
<svg style="left:103.8px;top:485px" width="8" height="12" viewBox="0 0 8 12"><path d="M1 .8L6.5 6L1 11.2Z" fill="none" stroke="#1E1E1E" stroke-width="1.25" stroke-linejoin="miter"/></svg>
<svg style="left:119px;top:487.4px" width="8" height="12" viewBox="0 0 8 12"><rect x=".8" y="5" width="6.4" height="5.6" fill="#DCE9F6" stroke="#1A7CD2" stroke-width="1.5"/><path d="M2.1 5V3.2A1.9 1.9 0 0 1 5.9 3.2V5" fill="none" stroke="#1A7CD2" stroke-width="1.2"/></svg>
<div class="t" style="left:131.3px;top:483.2px;font-size:13.5px;color:#3A9C3A;line-height:18px;height:18px"><b>C</b></div><div class="t" style="left:141.2px;top:482px;font-size:11px;color:#3A9C3A;line-height:18px;height:18px;transform:scaleX(1.25);transform-origin:left"><b>#</b></div>
<div class="tr" style="left:155.7px;top:479.5px;font-size:15px;letter-spacing:0.899px;">OrderViewModel.cs</div>
<svg style="left:80.8px;top:509px" width="8" height="12" viewBox="0 0 8 12"><path d="M1 .8L6.5 6L1 11.2Z" fill="none" stroke="#1E1E1E" stroke-width="1.25" stroke-linejoin="miter"/></svg>
<svg style="left:96px;top:511.4px" width="8" height="12" viewBox="0 0 8 12"><rect x=".8" y="5" width="6.4" height="5.6" fill="#DCE9F6" stroke="#1A7CD2" stroke-width="1.5"/><path d="M2.1 5V3.2A1.9 1.9 0 0 1 5.9 3.2V5" fill="none" stroke="#1A7CD2" stroke-width="1.2"/></svg>
<svg style="left:106.7px;top:508.5px" width="18" height="14" viewBox="0 0 18 14"><path d="M.8 13V.8H6.8L8.6 2.4H17.2V13Z" fill="#D8B878" stroke="#BE9636" stroke-width="1.4" stroke-linejoin="round"/><path d="M.8 4H6.2L8.4 2.4" fill="none" stroke="#BE9636" stroke-width="1.1"/></svg>
<div class="tr" style="left:133.7px;top:503.5px;font-size:15px;letter-spacing:0.793px;">Validations</div>
<svg style="left:57.5px;top:536px" width="9" height="9" viewBox="0 0 9 9"><path d="M8 .5V8H.5Z" fill="#1E1E1E"/></svg>
<svg style="left:74px;top:535.4px" width="8" height="12" viewBox="0 0 8 12"><rect x=".8" y="5" width="6.4" height="5.6" fill="#DCE9F6" stroke="#1A7CD2" stroke-width="1.5"/><path d="M2.1 5V3.2A1.9 1.9 0 0 1 5.9 3.2V5" fill="none" stroke="#1A7CD2" stroke-width="1.2"/></svg>
<svg style="left:86.7px;top:532.5px" width="18" height="14" viewBox="0 0 18 14"><path d="M.8 13V.8H6.8L8.6 2.4H17.2V13Z" fill="#D8B878" stroke="#BE9636" stroke-width="1.4" stroke-linejoin="round"/><path d="M.8 4H6.2L8.4 2.4" fill="none" stroke="#BE9636" stroke-width="1.1"/></svg>
<div class="tr" style="left:110.7px;top:527.5px;font-size:15px;letter-spacing:0.452px;">Extensions</div>
<svg style="left:80.8px;top:557px" width="8" height="12" viewBox="0 0 8 12"><path d="M1 .8L6.5 6L1 11.2Z" fill="none" stroke="#1E1E1E" stroke-width="1.25" stroke-linejoin="miter"/></svg>
<svg style="left:96px;top:559.4px" width="8" height="12" viewBox="0 0 8 12"><rect x=".8" y="5" width="6.4" height="5.6" fill="#DCE9F6" stroke="#1A7CD2" stroke-width="1.5"/><path d="M2.1 5V3.2A1.9 1.9 0 0 1 5.9 3.2V5" fill="none" stroke="#1A7CD2" stroke-width="1.2"/></svg>
<div class="t" style="left:111.2px;top:553.5px;font-size:11.5px;color:#3A9C3A;line-height:18px;height:18px"><b>C</b></div><div class="t" style="left:119.2px;top:552.5px;font-size:10px;color:#3A9C3A;line-height:18px;height:18px;transform:scaleX(1.2);transform-origin:left"><b>#</b></div><svg style="left:108px;top:562px" width="11" height="10" viewBox="0 0 11 10"><rect x=".6" y=".6" width="9.5" height="8.5" fill="#F0F0F0" stroke="#555" stroke-width="1.2"/><path d="M3 7L7 3M4 3H7V6" fill="none" stroke="#333" stroke-width="1.2"/></svg>
<div class="tr" style="left:133.7px;top:551.5px;font-size:15px;letter-spacing:0.569px;">ActivityExtensions.cs</div>
<svg style="left:80.8px;top:581px" width="8" height="12" viewBox="0 0 8 12"><path d="M1 .8L6.5 6L1 11.2Z" fill="none" stroke="#1E1E1E" stroke-width="1.25" stroke-linejoin="miter"/></svg>
<svg style="left:96px;top:583.4px" width="8" height="12" viewBox="0 0 8 12"><rect x=".8" y="5" width="6.4" height="5.6" fill="#DCE9F6" stroke="#1A7CD2" stroke-width="1.5"/><path d="M2.1 5V3.2A1.9 1.9 0 0 1 5.9 3.2V5" fill="none" stroke="#1A7CD2" stroke-width="1.2"/></svg>
<div class="t" style="left:108.3px;top:579.2px;font-size:13.5px;color:#3A9C3A;line-height:18px;height:18px"><b>C</b></div><div class="t" style="left:118.2px;top:578px;font-size:11px;color:#3A9C3A;line-height:18px;height:18px;transform:scaleX(1.25);transform-origin:left"><b>#</b></div>
<div class="tr" style="left:133.7px;top:575.5px;font-size:15px;letter-spacing:0.401px;">BasketItemExtensions.cs</div>
<svg style="left:80.8px;top:605px" width="8" height="12" viewBox="0 0 8 12"><path d="M1 .8L6.5 6L1 11.2Z" fill="none" stroke="#1E1E1E" stroke-width="1.25" stroke-linejoin="miter"/></svg>
<svg style="left:96px;top:607.4px" width="8" height="12" viewBox="0 0 8 12"><rect x=".8" y="5" width="6.4" height="5.6" fill="#DCE9F6" stroke="#1A7CD2" stroke-width="1.5"/><path d="M2.1 5V3.2A1.9 1.9 0 0 1 5.9 3.2V5" fill="none" stroke="#1A7CD2" stroke-width="1.2"/></svg>
<div class="t" style="left:108.3px;top:603.2px;font-size:13.5px;color:#3A9C3A;line-height:18px;height:18px"><b>C</b></div><div class="t" style="left:118.2px;top:602px;font-size:11px;color:#3A9C3A;line-height:18px;height:18px;transform:scaleX(1.25);transform-origin:left"><b>#</b></div>
<div class="tr" style="left:133.7px;top:599.5px;font-size:15px;letter-spacing:0.304px;">Extensions.cs</div>
<svg style="left:80.8px;top:629px" width="8" height="12" viewBox="0 0 8 12"><path d="M1 .8L6.5 6L1 11.2Z" fill="none" stroke="#1E1E1E" stroke-width="1.25" stroke-linejoin="miter"/></svg>
<svg style="left:96px;top:631.4px" width="8" height="12" viewBox="0 0 8 12"><rect x=".8" y="5" width="6.4" height="5.6" fill="#DCE9F6" stroke="#1A7CD2" stroke-width="1.5"/><path d="M2.1 5V3.2A1.9 1.9 0 0 1 5.9 3.2V5" fill="none" stroke="#1A7CD2" stroke-width="1.2"/></svg>
<div class="t" style="left:108.3px;top:627.2px;font-size:13.5px;color:#3A9C3A;line-height:18px;height:18px"><b>C</b></div><div class="t" style="left:118.2px;top:626px;font-size:11px;color:#3A9C3A;line-height:18px;height:18px;transform:scaleX(1.25);transform-origin:left"><b>#</b></div>
<div class="tr" style="left:133.7px;top:623.5px;font-size:15px;letter-spacing:0.444px;">LinqSelectExtensions.cs</div>
<svg style="left:80.8px;top:653px" width="8" height="12" viewBox="0 0 8 12"><path d="M1 .8L6.5 6L1 11.2Z" fill="none" stroke="#1E1E1E" stroke-width="1.25" stroke-linejoin="miter"/></svg>
<svg style="left:96px;top:655.4px" width="8" height="12" viewBox="0 0 8 12"><rect x=".8" y="5" width="6.4" height="5.6" fill="#DCE9F6" stroke="#1A7CD2" stroke-width="1.5"/><path d="M2.1 5V3.2A1.9 1.9 0 0 1 5.9 3.2V5" fill="none" stroke="#1A7CD2" stroke-width="1.2"/></svg>
<div class="t" style="left:111.2px;top:649.5px;font-size:11.5px;color:#3A9C3A;line-height:18px;height:18px"><b>C</b></div><div class="t" style="left:119.2px;top:648.5px;font-size:10px;color:#3A9C3A;line-height:18px;height:18px;transform:scaleX(1.2);transform-origin:left"><b>#</b></div><svg style="left:108px;top:658px" width="11" height="10" viewBox="0 0 11 10"><rect x=".6" y=".6" width="9.5" height="8.5" fill="#F0F0F0" stroke="#555" stroke-width="1.2"/><path d="M3 7L7 3M4 3H7V6" fill="none" stroke="#333" stroke-width="1.2"/></svg>
<div class="tr" style="left:133.7px;top:647.5px;font-size:15px;letter-spacing:0.653px">MigrateDbContextExtensions.cs</div>
<svg style="left:80.8px;top:677px" width="8" height="12" viewBox="0 0 8 12"><path d="M1 .8L6.5 6L1 11.2Z" fill="none" stroke="#1E1E1E" stroke-width="1.25" stroke-linejoin="miter"/></svg>
<svg style="left:96px;top:679.4px" width="8" height="12" viewBox="0 0 8 12"><rect x=".8" y="5" width="6.4" height="5.6" fill="#DCE9F6" stroke="#1A7CD2" stroke-width="1.5"/><path d="M2.1 5V3.2A1.9 1.9 0 0 1 5.9 3.2V5" fill="none" stroke="#1A7CD2" stroke-width="1.2"/></svg>
<div class="t" style="left:108.3px;top:675.2px;font-size:13.5px;color:#3A9C3A;line-height:18px;height:18px"><b>C</b></div><div class="t" style="left:118.2px;top:674px;font-size:11px;color:#3A9C3A;line-height:18px;height:18px;transform:scaleX(1.25);transform-origin:left"><b>#</b></div>
<div class="tr" style="left:133.7px;top:671.5px;font-size:15px;letter-spacing:0.721px;">OrderingApiTrace.cs</div>
<svg style="left:58.8px;top:701px" width="8" height="12" viewBox="0 0 8 12"><path d="M1 .8L6.5 6L1 11.2Z" fill="none" stroke="#1E1E1E" stroke-width="1.25" stroke-linejoin="miter"/></svg>
<svg style="left:74px;top:703.4px" width="8" height="12" viewBox="0 0 8 12"><rect x=".8" y="5" width="6.4" height="5.6" fill="#DCE9F6" stroke="#1A7CD2" stroke-width="1.5"/><path d="M2.1 5V3.2A1.9 1.9 0 0 1 5.9 3.2V5" fill="none" stroke="#1A7CD2" stroke-width="1.2"/></svg>
<svg style="left:86.7px;top:700.5px" width="18" height="14" viewBox="0 0 18 14"><path d="M.8 13V.8H6.8L8.6 2.4H17.2V13Z" fill="#D8B878" stroke="#BE9636" stroke-width="1.4" stroke-linejoin="round"/><path d="M.8 4H6.2L8.4 2.4" fill="none" stroke="#BE9636" stroke-width="1.1"/></svg>
<div class="tr" style="left:110.7px;top:695.5px;font-size:15px;letter-spacing:0.766px;">Infrastructure</div>
<svg style="left:58.8px;top:725px" width="8" height="12" viewBox="0 0 8 12"><path d="M1 .8L6.5 6L1 11.2Z" fill="none" stroke="#1E1E1E" stroke-width="1.25" stroke-linejoin="miter"/></svg>
<svg style="left:74px;top:727.4px" width="8" height="12" viewBox="0 0 8 12"><rect x=".8" y="5" width="6.4" height="5.6" fill="#DCE9F6" stroke="#1A7CD2" stroke-width="1.5"/><path d="M2.1 5V3.2A1.9 1.9 0 0 1 5.9 3.2V5" fill="none" stroke="#1A7CD2" stroke-width="1.2"/></svg>
<svg style="left:88px;top:723px" width="16" height="17" viewBox="0 0 16 17"><path d="M1 16V1H10L15 6V16Z" fill="#F0F0F0" stroke="#555" stroke-width="1.4"/><path d="M5 8Q3.5 8 4 10Q4.3 11.5 3 12Q4.3 12.5 4 14Q3.5 16 5 16M10 8Q11.5 8 11 10Q10.7 11.5 12 12Q10.7 12.5 11 14Q11.5 16 10 16" fill="none" stroke="#555" stroke-width="1.1"/></svg>
<div class="tr" style="left:110.7px;top:719.5px;font-size:15px;letter-spacing:0.663px">appsettings.json</div>
</div>
<svg style="left:1864px;top:187px" width="11" height="6" viewBox="0 0 11 6"><path d="M0 6L5.5 0L11 6Z" fill="#868999"/></svg>
<svg style="left:1864px;top:902px" width="11" height="6" viewBox="0 0 11 6"><path d="M0 0L5.5 6L11 0Z" fill="#868999"/></svg>
<div class="a" style="left:1864px;top:307px;width:11px;height:215px;background:#C2C3C9;"></div>
<svg style="left:1518px;top:920px" width="6" height="11" viewBox="0 0 6 11"><path d="M6 0L0 5.5L6 11Z" fill="#868999"/></svg>
<svg style="left:1846px;top:920px" width="6" height="11" viewBox="0 0 6 11"><path d="M0 0L6 5.5L0 11Z" fill="#868999"/></svg>
<div class="a" style="left:1531px;top:920px;width:149px;height:11px;background:#C2C3C9;"></div>
<div class="a" style="left:1859px;top:915px;width:21px;height:22px;background:#EEEEF2;"></div>
<div class="a" style="left:1509px;top:937px;width:372px;height:24px;background:#EEEEF2;"></div>
<div class="a" style="left:1509px;top:937px;width:372px;height:1px;background:#CCCEDB;"></div>
<div class="a" style="left:1509px;top:937px;width:149px;height:24px;background:#F5F5F5;border:1px solid #CCCEDB;box-sizing:border-box;border-top:none"></div>
<div class="t" style="left:1516px;top:939px;font-size:15px;color:#0E70C0;">解决方案资源管理器</div>
<div class="t" style="left:1665px;top:939px;font-size:15px;color:#444444;">Git 更改</div>
<div class="a" style="left:1887px;top:87.5px;width:20px;height:34px;writing-mode:vertical-rl;text-orientation:sideways;font-size:15px;line-height:20px;color:#444">属性</div>
<div class="a" style="left:1912px;top:88px;width:8px;height:29px;background:#CCCEDB;"></div>
</body></html>
